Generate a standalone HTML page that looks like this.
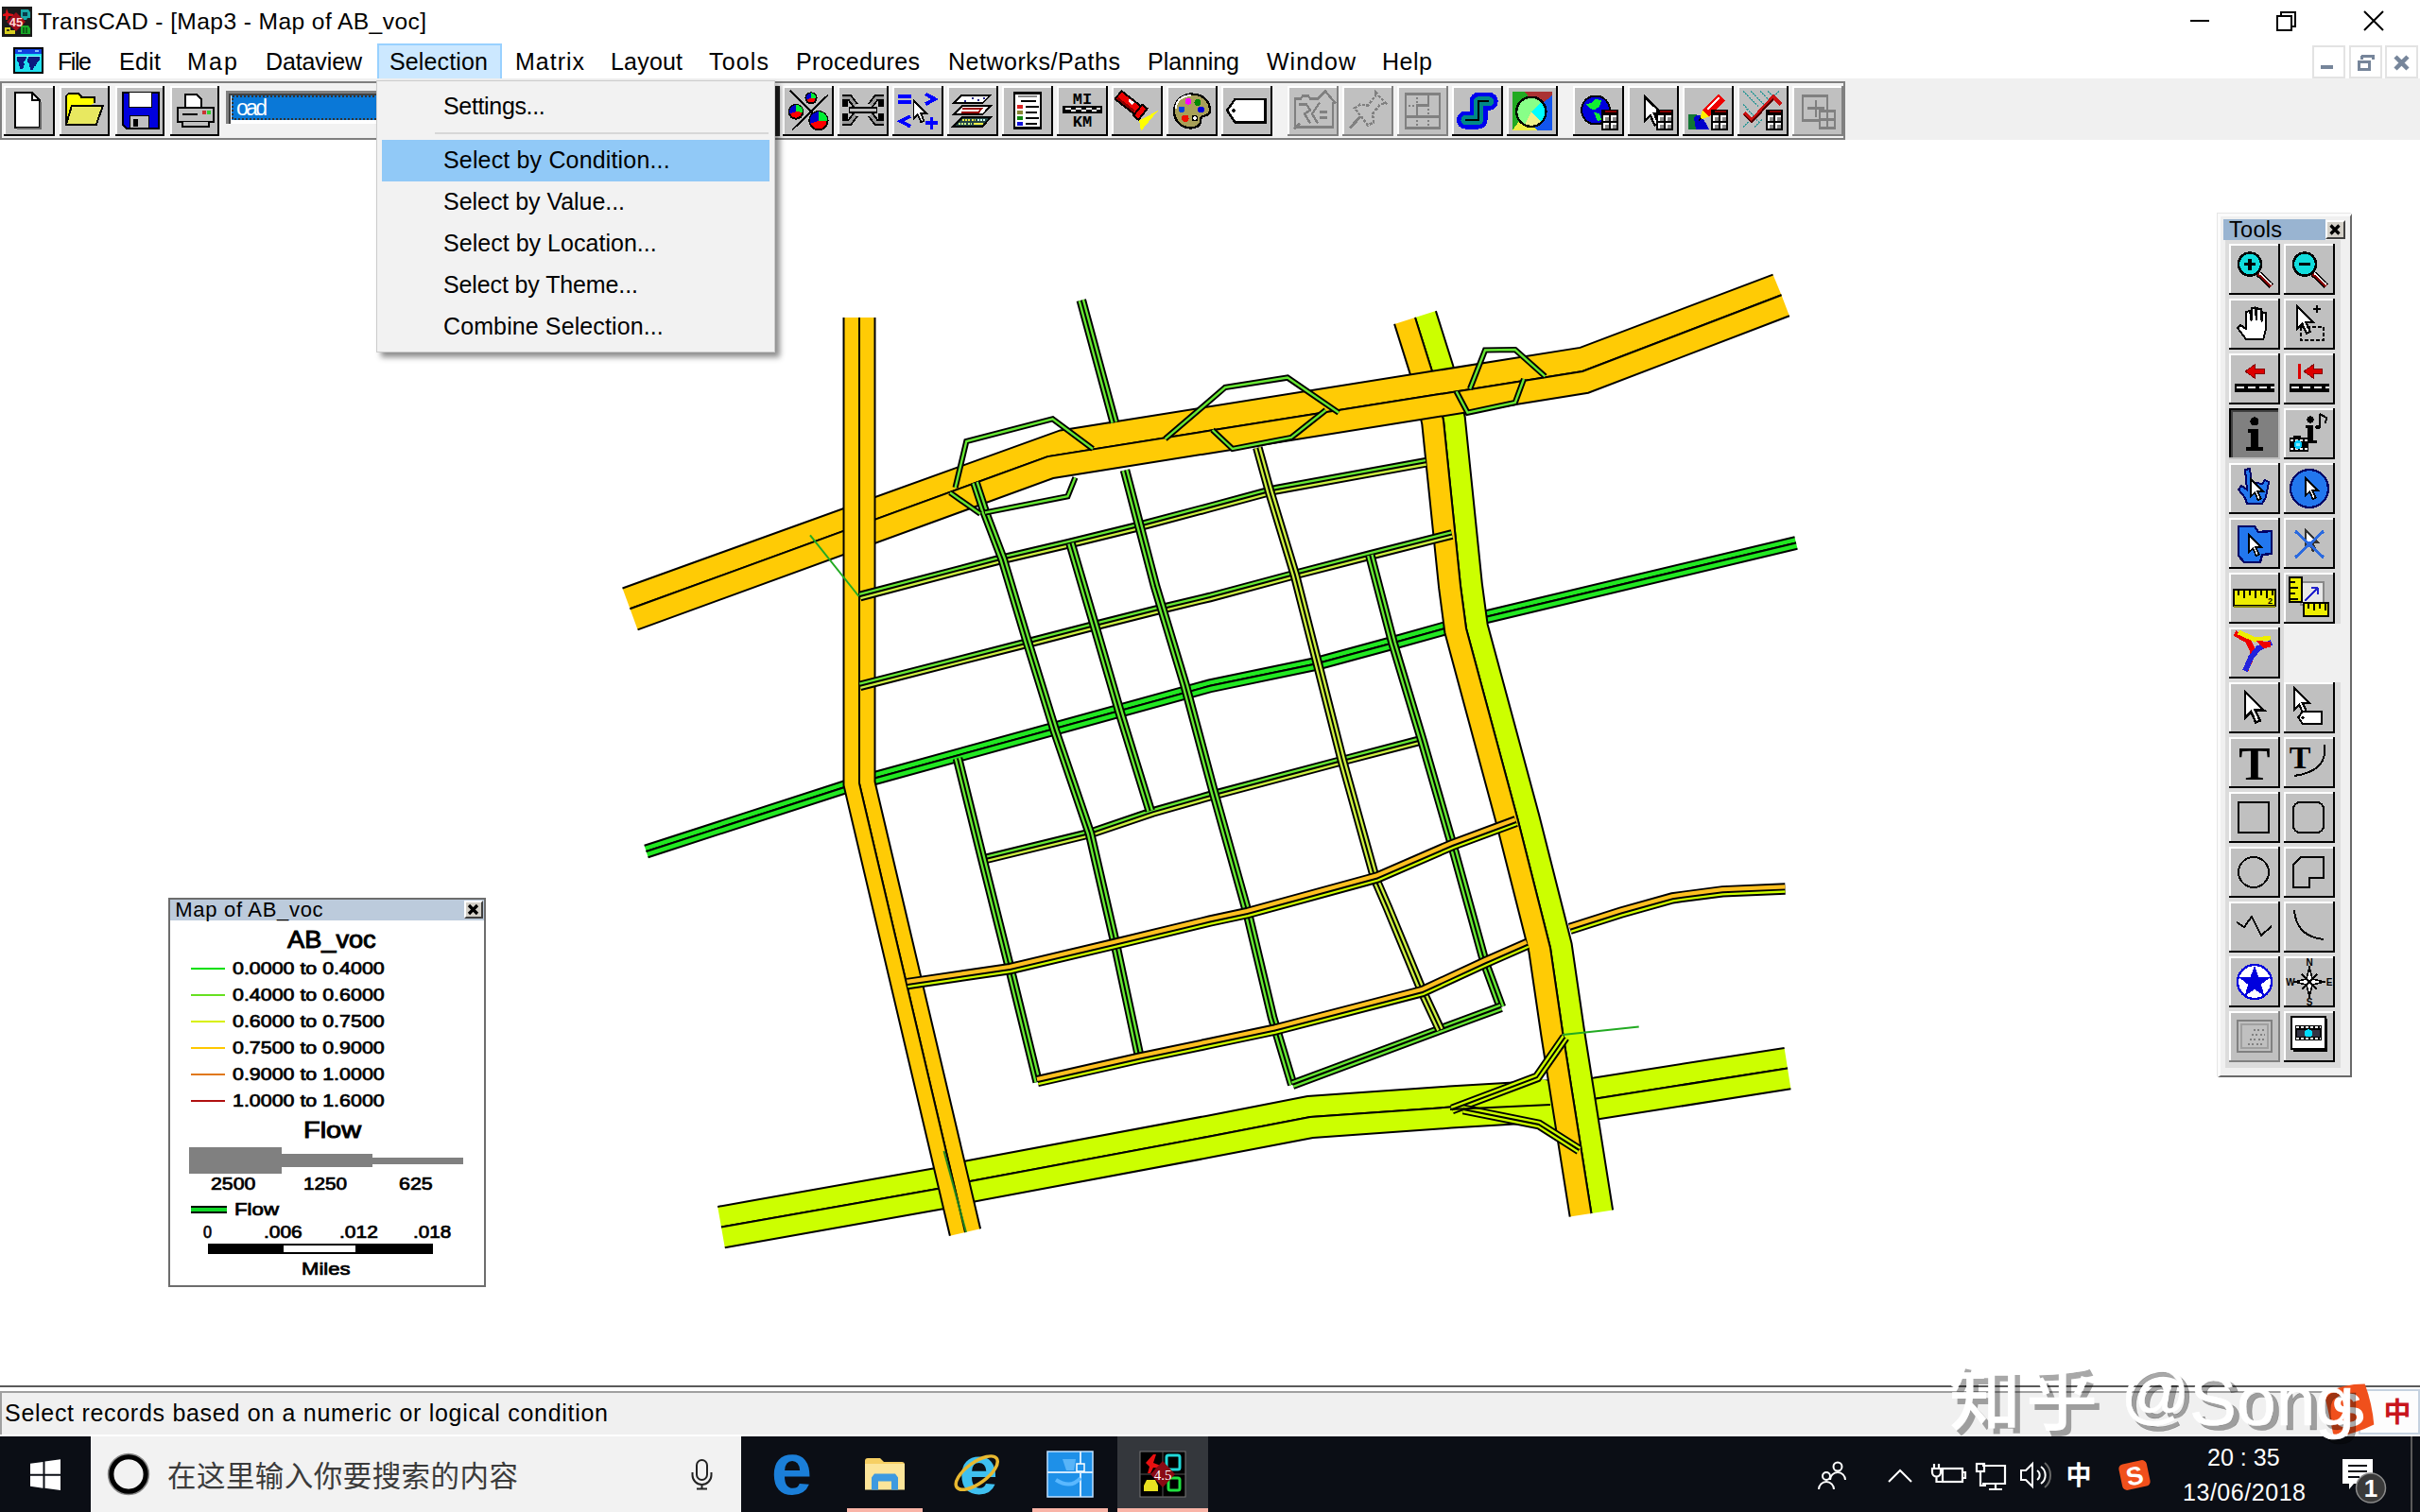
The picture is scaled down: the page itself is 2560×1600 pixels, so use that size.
<!DOCTYPE html>
<html><head><meta charset="utf-8"><title>TransCAD - [Map3 - Map of AB_voc]</title>
<style>
html,body{margin:0;padding:0;}
body{width:2560px;height:1600px;position:relative;overflow:hidden;background:#fff;font-family:"Liberation Sans","Noto Sans CJK SC",sans-serif;}
.t{position:absolute;white-space:pre;line-height:normal;}
.abs{position:absolute;}
</style></head><body>

<svg class="abs" style="left:0;top:0" width="2560" height="1600" viewBox="0 0 2560 1600">
<polygon points="683.6,901.0 909.0,828.0 1280.0,725.8 1392.0,702.5 1473.0,680.5 1526.0,665.7 1571.0,653.0 1900.0,574.5 1898.5,568.2 1569.4,646.7 1524.2,659.4 1471.3,674.2 1390.5,696.2 1278.5,719.5 907.1,821.8 681.6,894.8" fill="#22E822" stroke="none"/><polyline points="683.6,901.0 909.0,828.0 1280.0,725.8 1392.0,702.5 1473.0,680.5 1526.0,665.7 1571.0,653.0 1900.0,574.5" fill="none" stroke="#000" stroke-width="2"/><polyline points="681.6,894.8 907.1,821.8 1278.5,719.5 1390.5,696.2 1471.3,674.2 1524.2,659.4 1569.4,646.7 1898.5,568.2" fill="none" stroke="#000" stroke-width="2"/><polygon points="683.6,901.0 909.0,828.0 1280.0,725.8 1392.0,702.5 1473.0,680.5 1526.0,665.7 1571.0,653.0 1900.0,574.5 1901.5,580.8 1572.6,659.3 1527.8,672.0 1474.7,686.8 1393.5,708.8 1281.5,732.1 910.9,834.2 685.6,907.2" fill="#22E822" stroke="none"/><polyline points="683.6,901.0 909.0,828.0 1280.0,725.8 1392.0,702.5 1473.0,680.5 1526.0,665.7 1571.0,653.0 1900.0,574.5" fill="none" stroke="#000" stroke-width="2"/><polyline points="685.6,907.2 910.9,834.2 1281.5,732.1 1393.5,708.8 1474.7,686.8 1527.8,672.0 1572.6,659.3 1901.5,580.8" fill="none" stroke="#000" stroke-width="2"/>
<polygon points="763.0,1298.6 994.5,1257.6 1027.6,1249.7 1280.0,1202.5 1386.0,1182.0 1534.0,1171.6 1688.7,1162.4 1891.0,1130.6 1887.6,1108.9 1686.3,1140.5 1532.6,1149.6 1383.1,1160.1 1275.9,1180.9 1023.0,1228.2 990.0,1236.1 759.2,1276.9" fill="#CCFF00" stroke="none"/><polyline points="763.0,1298.6 994.5,1257.6 1027.6,1249.7 1280.0,1202.5 1386.0,1182.0 1534.0,1171.6 1688.7,1162.4 1891.0,1130.6" fill="none" stroke="#000" stroke-width="2"/><polyline points="759.2,1276.9 990.0,1236.1 1023.0,1228.2 1275.9,1180.9 1383.1,1160.1 1532.6,1149.6 1686.3,1140.5 1887.6,1108.9" fill="none" stroke="#000" stroke-width="2"/><polygon points="763.0,1298.6 994.5,1257.6 1027.6,1249.7 1280.0,1202.5 1386.0,1182.0 1534.0,1171.6 1688.7,1162.4 1891.0,1130.6 1894.4,1152.3 1691.1,1184.3 1535.4,1193.6 1388.9,1203.9 1284.1,1224.1 1032.2,1271.2 999.0,1279.1 766.8,1320.3" fill="#CCFF00" stroke="none"/><polyline points="763.0,1298.6 994.5,1257.6 1027.6,1249.7 1280.0,1202.5 1386.0,1182.0 1534.0,1171.6 1688.7,1162.4 1891.0,1130.6" fill="none" stroke="#000" stroke-width="2"/><polyline points="766.8,1320.3 999.0,1279.1 1032.2,1271.2 1284.1,1224.1 1388.9,1203.9 1535.4,1193.6 1691.1,1184.3 1894.4,1152.3" fill="none" stroke="#000" stroke-width="2"/>
<polygon points="1534,1174 1624,1140 1660,1150 1668,1200 1624,1193" fill="#CCFF00" stroke="none"/>
<polygon points="1497.0,336.0 1515.0,393.0 1527.0,445.0 1545.0,620.0 1551.0,665.0 1605.8,868.0 1640.0,1003.0 1653.0,1092.0 1683.4,1284.0 1706.1,1280.4 1675.7,1088.5 1662.6,998.5 1628.1,862.2 1573.6,660.5 1567.8,617.3 1549.7,441.2 1537.2,386.9 1518.9,329.1" fill="#CCFF00" stroke="none"/><polyline points="1497.0,336.0 1515.0,393.0 1527.0,445.0 1545.0,620.0 1551.0,665.0 1605.8,868.0 1640.0,1003.0 1653.0,1092.0 1683.4,1284.0" fill="none" stroke="#000" stroke-width="2"/><polyline points="1518.9,329.1 1537.2,386.9 1549.7,441.2 1567.8,617.3 1573.6,660.5 1628.1,862.2 1662.6,998.5 1675.7,1088.5 1706.1,1280.4" fill="none" stroke="#000" stroke-width="2"/><polygon points="1497.0,336.0 1515.0,393.0 1527.0,445.0 1545.0,620.0 1551.0,665.0 1605.8,868.0 1640.0,1003.0 1653.0,1092.0 1683.4,1284.0 1660.7,1287.6 1630.3,1095.5 1617.4,1007.5 1583.5,873.8 1528.4,669.5 1522.2,622.7 1504.3,448.8 1492.8,399.1 1475.1,342.9" fill="#FFCB05" stroke="none"/><polyline points="1497.0,336.0 1515.0,393.0 1527.0,445.0 1545.0,620.0 1551.0,665.0 1605.8,868.0 1640.0,1003.0 1653.0,1092.0 1683.4,1284.0" fill="none" stroke="#000" stroke-width="2"/><polyline points="1475.1,342.9 1492.8,399.1 1504.3,448.8 1522.2,622.7 1528.4,669.5 1583.5,873.8 1617.4,1007.5 1630.3,1095.5 1660.7,1287.6" fill="none" stroke="#000" stroke-width="2"/>
<polygon points="666.5,644.3 1108.3,483.1 1674.0,393.0 1884.5,312.3 1875.5,290.6 1671.5,367.9 1121.5,455.4 658.5,622.5" fill="#FFCB05" stroke="none"/><polyline points="666.5,644.3 1108.3,483.1 1674.0,393.0 1884.5,312.3" fill="none" stroke="#000" stroke-width="2"/><polyline points="658.5,622.5 1121.5,455.4 1671.5,367.9 1875.5,290.6" fill="none" stroke="#000" stroke-width="2"/><polygon points="666.5,644.3 1108.3,483.1 1674.0,393.0 1884.5,312.3 1892.9,334.2 1680.1,415.8 1114.2,506.0 674.6,666.4" fill="#FFCB05" stroke="none"/><polyline points="666.5,644.3 1108.3,483.1 1674.0,393.0 1884.5,312.3" fill="none" stroke="#000" stroke-width="2"/><polyline points="674.6,666.4 1114.2,506.0 1680.1,415.8 1892.9,334.2" fill="none" stroke="#000" stroke-width="2"/>
<polygon points="909.0,336.0 909.0,829.0 1021.0,1304.0 1037.1,1300.2 925.5,827.1 925.5,336.0" fill="#FFCB05" stroke="none"/><polyline points="909.0,336.0 909.0,829.0 1021.0,1304.0" fill="none" stroke="#000" stroke-width="2"/><polyline points="925.5,336.0 925.5,827.1 1037.1,1300.2" fill="none" stroke="#000" stroke-width="2"/><polygon points="909.0,336.0 909.0,829.0 1021.0,1304.0 1004.9,1307.8 892.5,830.9 892.5,336.0" fill="#FFCB05" stroke="none"/><polyline points="909.0,336.0 909.0,829.0 1021.0,1304.0" fill="none" stroke="#000" stroke-width="2"/><polyline points="892.5,336.0 892.5,830.9 1004.9,1307.8" fill="none" stroke="#000" stroke-width="2"/>
<polyline points="909.8,631.0 1052.7,593.5 1129.4,575.5 1200.8,558.0 1280.0,537.0 1349.6,518.2 1508.3,489.3" fill="none" stroke="#000" stroke-width="10.6" stroke-linejoin="miter"/><polyline points="909.2,628.9 1052.2,591.4 1128.9,573.4 1200.3,555.9 1279.4,534.9 1349.1,516.1 1507.9,487.1" fill="none" stroke="#66E833" stroke-width="2.4" /><polyline points="910.4,633.1 1053.2,595.6 1129.9,577.6 1201.3,560.1 1280.6,539.1 1350.1,520.3 1508.7,491.5" fill="none" stroke="#CCF040" stroke-width="2.4" />
<polyline points="909.8,725.8 1087.0,680.5 1158.5,662.0 1230.0,644.0 1280.0,632.0 1367.8,608.5 1449.3,587.5 1536.0,565.5" fill="none" stroke="#000" stroke-width="10.6" stroke-linejoin="miter"/><polyline points="909.3,723.7 1086.5,678.4 1158.0,659.9 1229.5,641.9 1279.5,629.9 1367.2,606.4 1448.8,585.4 1535.5,563.4" fill="none" stroke="#66E833" stroke-width="2.4" /><polyline points="910.3,727.9 1087.5,682.6 1159.0,664.1 1230.5,646.1 1280.5,634.1 1368.4,610.6 1449.8,589.6 1536.5,567.6" fill="none" stroke="#CCF040" stroke-width="2.4" />
<polyline points="1039.5,909.7 1153.0,882.0 1219.4,859.4 1280.0,842.2 1420.0,805.0 1504.5,783.0" fill="none" stroke="#000" stroke-width="10.6" stroke-linejoin="miter"/><polyline points="1039.0,907.6 1152.4,879.9 1218.7,857.3 1279.4,840.1 1419.4,802.9 1503.9,780.9" fill="none" stroke="#66E833" stroke-width="2.4" /><polyline points="1040.0,911.8 1153.6,884.1 1220.1,861.5 1280.6,844.3 1420.6,807.1 1505.1,785.1" fill="none" stroke="#CCF040" stroke-width="2.4" />
<polyline points="1143.8,317.6 1178.8,447.0" fill="none" stroke="#000" stroke-width="10.6" stroke-linejoin="miter"/><polyline points="1145.9,317.0 1180.9,446.4" fill="none" stroke="#66E833" stroke-width="2.4" /><polyline points="1141.7,318.2 1176.7,447.6" fill="none" stroke="#66E833" stroke-width="2.4" />
<polyline points="1190.0,497.5 1222.0,620.0 1253.8,725.8 1283.0,835.0 1319.7,966.0 1346.0,1076.4 1367.3,1147.8" fill="none" stroke="#000" stroke-width="10.6" stroke-linejoin="miter"/><polyline points="1192.1,496.9 1224.1,619.4 1255.9,725.2 1285.1,834.4 1321.8,965.4 1348.1,1075.8 1369.4,1147.2" fill="none" stroke="#66E833" stroke-width="2.4" /><polyline points="1187.9,498.1 1219.9,620.6 1251.7,726.4 1280.9,835.6 1317.6,966.6 1343.9,1077.0 1365.2,1148.4" fill="none" stroke="#66E833" stroke-width="2.4" />
<polyline points="1031.5,510.7 1042.0,542.5 1060.6,591.4 1087.0,679.5 1116.0,773.4 1153.0,882.0 1179.7,998.0 1206.0,1121.4" fill="none" stroke="#000" stroke-width="10.6" stroke-linejoin="miter"/><polyline points="1033.6,510.0 1044.1,541.8 1062.7,590.7 1089.1,678.9 1118.1,772.7 1155.1,881.4 1181.8,997.5 1208.2,1120.9" fill="none" stroke="#66E833" stroke-width="2.4" /><polyline points="1029.4,511.4 1039.9,543.2 1058.5,592.1 1084.9,680.1 1113.9,774.1 1150.9,882.6 1177.6,998.5 1203.8,1121.9" fill="none" stroke="#66E833" stroke-width="2.4" />
<polyline points="1132.5,575.0 1158.0,662.0 1184.5,753.3 1216.7,858.0" fill="none" stroke="#000" stroke-width="10.6" stroke-linejoin="miter"/><polyline points="1134.6,574.4 1160.1,661.4 1186.6,752.7 1218.8,857.4" fill="none" stroke="#66E833" stroke-width="2.4" /><polyline points="1130.4,575.6 1155.9,662.6 1182.4,753.9 1214.6,858.6" fill="none" stroke="#66E833" stroke-width="2.4" />
<polyline points="1013.0,802.5 1039.5,909.7 1068.6,1026.0 1097.7,1145.0" fill="none" stroke="#000" stroke-width="10.6" stroke-linejoin="miter"/><polyline points="1015.1,802.0 1041.6,909.2 1070.7,1025.5 1099.8,1144.5" fill="none" stroke="#66E833" stroke-width="2.4" /><polyline points="1010.9,803.0 1037.4,910.2 1066.5,1026.5 1095.6,1145.5" fill="none" stroke="#66E833" stroke-width="2.4" />
<polyline points="1449.3,587.5 1473.6,680.6 1504.5,783.5 1536.6,895.0 1571.0,1019.5 1588.0,1065.8" fill="none" stroke="#000" stroke-width="10.6" stroke-linejoin="miter"/><polyline points="1451.4,586.9 1475.7,680.0 1506.6,782.9 1538.7,894.4 1573.1,1018.8 1590.1,1065.0" fill="none" stroke="#66E833" stroke-width="2.4" /><polyline points="1447.2,588.1 1471.5,681.2 1502.4,784.1 1534.5,895.6 1568.9,1020.2 1585.9,1066.6" fill="none" stroke="#66E833" stroke-width="2.4" />
<polyline points="1367.3,1147.8 1523.4,1089.6 1588.0,1065.8" fill="none" stroke="#000" stroke-width="10.6" stroke-linejoin="miter"/><polyline points="1366.5,1145.7 1522.6,1087.5 1587.2,1063.7" fill="none" stroke="#66E833" stroke-width="2.4" /><polyline points="1368.1,1149.9 1524.2,1091.7 1588.8,1067.9" fill="none" stroke="#66E833" stroke-width="2.4" />
<polyline points="1330.3,473.7 1343.5,521.3 1370.0,608.6 1393.8,702.0 1420.0,805.0 1454.6,929.5 1467.8,960.0 1505.0,1050.0 1523.4,1089.6" fill="none" stroke="#000" stroke-width="10.6" stroke-linejoin="miter"/><polyline points="1332.4,473.1 1345.6,520.7 1372.1,608.0 1395.9,701.5 1422.1,804.4 1456.7,928.8 1469.8,959.1 1507.0,1049.1 1525.4,1088.7" fill="none" stroke="#CCF040" stroke-width="2.4" /><polyline points="1328.2,474.3 1341.4,521.9 1367.9,609.2 1391.7,702.5 1417.9,805.6 1452.5,930.2 1465.8,960.9 1503.0,1050.9 1521.4,1090.5" fill="none" stroke="#CCF040" stroke-width="2.4" />
<polyline points="959.9,1041.1 1068.4,1025.1 1179.5,998.8 1279.8,974.6 1319.5,966.1 1456.7,928.6 1536.2,894.1 1603.7,869.1" fill="none" stroke="#000" stroke-width="12.3" stroke-linejoin="miter"/><polyline points="959.5,1038.9 1068.0,1023.0 1179.0,996.7 1279.3,972.5 1319.0,964.0 1456.0,926.6 1535.4,892.1 1602.9,867.1" fill="none" stroke="#FFC020" stroke-width="4.2" /><polyline points="960.3,1044.1 1069.0,1028.1 1180.2,1001.8 1280.5,977.6 1320.2,969.1 1457.7,931.5 1537.4,897.0 1604.7,872.0" fill="none" stroke="#CCFF00" stroke-width="2.3" />
<polyline points="1097.5,1144.1 1205.8,1119.6 1279.8,1104.1 1348.6,1089.6 1504.7,1049.1 1570.6,1018.6 1615.6,998.8" fill="none" stroke="#000" stroke-width="12.3" stroke-linejoin="miter"/><polyline points="1097.0,1142.0 1205.3,1117.5 1279.4,1102.0 1348.1,1087.5 1504.0,1047.1 1569.7,1016.7 1614.8,996.9" fill="none" stroke="#FFC020" stroke-width="4.2" /><polyline points="1098.2,1147.1 1206.5,1122.6 1280.4,1107.1 1349.3,1092.6 1505.7,1052.0 1571.9,1021.5 1616.9,1001.7" fill="none" stroke="#CCFF00" stroke-width="2.3" />
<polyline points="1660.7,982.9 1714.7,965.6 1769.2,950.3 1822.2,943.3 1888.5,940.5" fill="none" stroke="#000" stroke-width="12.3" stroke-linejoin="miter"/><polyline points="1660.1,980.8 1714.1,963.5 1768.8,948.2 1822.0,941.1 1888.4,938.3" fill="none" stroke="#FFC020" stroke-width="4.2" /><polyline points="1661.7,985.8 1715.6,968.6 1769.8,953.3 1822.5,946.3 1888.6,943.5" fill="none" stroke="#CCFF00" stroke-width="2.3" />
<polyline points="1010.6,516.0 1022.3,467.0 1113.5,443.3 1156.0,475.0" fill="none" stroke="#000" stroke-width="6.2" /><polyline points="1010.6,516.0 1022.3,467.0 1113.5,443.3 1156.0,475.0" fill="none" stroke="#66E833" stroke-width="2.4" />
<polyline points="1005.0,521.3 1037.0,543.8" fill="none" stroke="#000" stroke-width="6.2" /><polyline points="1005.0,521.3 1037.0,543.8" fill="none" stroke="#66E833" stroke-width="2.4" />
<polyline points="1042.0,542.5 1129.4,525.3 1137.4,505.4" fill="none" stroke="#000" stroke-width="6.2" /><polyline points="1042.0,542.5 1129.4,525.3 1137.4,505.4" fill="none" stroke="#66E833" stroke-width="2.4" />
<polyline points="1232.6,464.4 1296.0,410.0 1362.0,399.6 1416.2,436.7" fill="none" stroke="#000" stroke-width="6.2" /><polyline points="1232.6,464.4 1296.0,410.0 1362.0,399.6 1416.2,436.7" fill="none" stroke="#66E833" stroke-width="2.4" />
<polyline points="1282.6,455.0 1303.8,475.0 1366.0,463.0 1402.5,434.0" fill="none" stroke="#000" stroke-width="6.2" /><polyline points="1282.6,455.0 1303.8,475.0 1366.0,463.0 1402.5,434.0" fill="none" stroke="#66E833" stroke-width="2.4" />
<polyline points="1555.0,411.5 1571.0,370.5 1602.8,370.0 1634.5,398.3" fill="none" stroke="#000" stroke-width="6.2" /><polyline points="1555.0,411.5 1571.0,370.5 1602.8,370.0 1634.5,398.3" fill="none" stroke="#66E833" stroke-width="2.4" />
<polyline points="1540.6,414.2 1552.5,436.7 1602.8,426.0 1612.0,401.0" fill="none" stroke="#000" stroke-width="6.2" /><polyline points="1540.6,414.2 1552.5,436.7 1602.8,426.0 1612.0,401.0" fill="none" stroke="#66E833" stroke-width="2.4" />
<polyline points="1655.5,1097.6 1626.0,1140.0 1536.0,1174.0" fill="none" stroke="#000" stroke-width="10.6" stroke-linejoin="miter"/><polyline points="1657.3,1098.9 1627.4,1141.8 1536.8,1176.1" fill="none" stroke="#CCFF00" stroke-width="2.4" /><polyline points="1653.7,1096.3 1624.6,1138.2 1535.2,1171.9" fill="none" stroke="#CCFF00" stroke-width="2.4" />
<polyline points="1548.0,1174.0 1628.0,1190.0 1670.5,1217.0" fill="none" stroke="#000" stroke-width="10.6" stroke-linejoin="miter"/><polyline points="1548.4,1171.8 1628.8,1187.9 1671.7,1215.1" fill="none" stroke="#CCFF00" stroke-width="2.4" /><polyline points="1547.6,1176.2 1627.2,1192.1 1669.3,1218.9" fill="none" stroke="#CCFF00" stroke-width="2.4" />
<polyline points="1534.0,1174.0 1640.0,1169.0" fill="none" stroke="#000" stroke-width="2" />
<polyline points="857.0,566.3 908.5,631.0" fill="none" stroke="#22AA22" stroke-width="2" />
<polyline points="1653.0,1095.0 1733.7,1086.5" fill="none" stroke="#22AA22" stroke-width="2" />
<polyline points="998.5,1218.0 1022.0,1304.0" fill="none" stroke="#228822" stroke-width="2" />
</svg>
<svg class="abs" style="left:2px;top:7px" width="32" height="32" viewBox="0 0 32 32">
<rect width="32" height="32" fill="#1a1a1a"/>
<path d="M5 2l2 5 5 1v2l-5 0-1 4h-2l0-4-3 0v-2l3-1z" fill="#e01018"/>
<path d="M20 3h8l2 3v6h-3l-1 2h-3l-1-2h-2z" fill="#18a8a8"/><path d="M22 6h5v4h-5z" fill="#0a3a4a"/>
<path d="M3 22h6v3h5v4h-11z" fill="#d8d020"/><path d="M5 24h3v2h-3z" fill="#3a3410"/>
<path d="M20 20h8l2 3v6h-10z" fill="#18a828"/><path d="M23 22v6M26 22v6" stroke="#0a4a12" stroke-width="1.5"/>
<polygon points="15,6 25,16 15,26 5,16" fill="#a00c18"/>
<text x="15" y="21" font-size="13" font-weight="bold" text-anchor="middle" fill="#ffd8d8" font-family="Liberation Sans,sans-serif">45</text>
</svg>
<span class="t" style="left:40.0px;top:9.3px;font-size:24.6px;font-weight:normal;color:#000;font-family:'Liberation Sans','Noto Sans CJK SC',sans-serif;letter-spacing:0.40px;">TransCAD - [Map3 - Map of AB_voc]</span>
<svg class="abs" style="left:2300px;top:0" width="260" height="44" viewBox="2300 0 260 44" shape-rendering="crispEdges">
<rect x="2317" y="21" width="20" height="2" fill="#000"/>
<rect x="2409" y="17" width="15" height="15" fill="none" stroke="#000" stroke-width="2"/>
<path d="M2413 17v-4h15v15h-4" fill="none" stroke="#000" stroke-width="2"/>
<path d="M2501 12l20 20M2521 12l-20 20" stroke="#000" stroke-width="2" shape-rendering="auto"/>
</svg>
<svg class="abs" style="left:14px;top:50px" width="32" height="28" viewBox="0 0 32 28" shape-rendering="crispEdges">
<rect width="32" height="28" fill="#000"/><rect x="2" y="2" width="28" height="24" fill="#20e0f0"/>
<rect x="2" y="2" width="28" height="5" fill="#1040e0"/><rect x="5" y="3" width="4" height="2" fill="#80c0ff"/><rect x="23" y="3" width="4" height="2" fill="#80c0ff"/>
<path d="M4 10h10l-1 4-2 1 1 3-2 5h-3l-1-6-2-2zM16 10h12v4l-3 2-1 4h-2l-1 4h-3l-1-6-2-3z" fill="#0c1a80"/><path d="M3 9h26" stroke="#8ff" stroke-width="1"/>
</svg>
<div class="abs" style="left:399px;top:46px;width:128px;height:35px;background:#cce8ff;border:2px solid #99d1ff;"></div>
<span class="t" style="left:61.0px;top:50.8px;font-size:25px;font-weight:normal;color:#000;font-family:'Liberation Sans','Noto Sans CJK SC',sans-serif;letter-spacing:-1.43px;">File</span>
<span class="t" style="left:126.0px;top:50.8px;font-size:25px;font-weight:normal;color:#000;font-family:'Liberation Sans','Noto Sans CJK SC',sans-serif;letter-spacing:0.31px;">Edit</span>
<span class="t" style="left:198.0px;top:50.8px;font-size:25px;font-weight:normal;color:#000;font-family:'Liberation Sans','Noto Sans CJK SC',sans-serif;letter-spacing:2.18px;">Map</span>
<span class="t" style="left:281.0px;top:50.8px;font-size:25px;font-weight:normal;color:#000;font-family:'Liberation Sans','Noto Sans CJK SC',sans-serif;letter-spacing:-0.12px;">Dataview</span>
<span class="t" style="left:412.0px;top:50.8px;font-size:25px;font-weight:normal;color:#000;font-family:'Liberation Sans','Noto Sans CJK SC',sans-serif;letter-spacing:0.14px;">Selection</span>
<span class="t" style="left:545.0px;top:50.8px;font-size:25px;font-weight:normal;color:#000;font-family:'Liberation Sans','Noto Sans CJK SC',sans-serif;letter-spacing:0.99px;">Matrix</span>
<span class="t" style="left:646.0px;top:50.8px;font-size:25px;font-weight:normal;color:#000;font-family:'Liberation Sans','Noto Sans CJK SC',sans-serif;letter-spacing:0.19px;">Layout</span>
<span class="t" style="left:750.0px;top:50.8px;font-size:25px;font-weight:normal;color:#000;font-family:'Liberation Sans','Noto Sans CJK SC',sans-serif;letter-spacing:1.16px;">Tools</span>
<span class="t" style="left:842.0px;top:50.8px;font-size:25px;font-weight:normal;color:#000;font-family:'Liberation Sans','Noto Sans CJK SC',sans-serif;letter-spacing:0.35px;">Procedures</span>
<span class="t" style="left:1003.0px;top:50.8px;font-size:25px;font-weight:normal;color:#000;font-family:'Liberation Sans','Noto Sans CJK SC',sans-serif;letter-spacing:0.53px;">Networks/Paths</span>
<span class="t" style="left:1214.0px;top:50.8px;font-size:25px;font-weight:normal;color:#000;font-family:'Liberation Sans','Noto Sans CJK SC',sans-serif;letter-spacing:-0.04px;">Planning</span>
<span class="t" style="left:1340.0px;top:50.8px;font-size:25px;font-weight:normal;color:#000;font-family:'Liberation Sans','Noto Sans CJK SC',sans-serif;letter-spacing:1.02px;">Window</span>
<span class="t" style="left:1462.0px;top:50.8px;font-size:25px;font-weight:normal;color:#000;font-family:'Liberation Sans','Noto Sans CJK SC',sans-serif;letter-spacing:0.53px;">Help</span>
<div class="abs" style="left:2446px;top:48px;width:31px;height:31px;background:#fff;border:2px solid #e3e3e3;"></div>
<div class="abs" style="left:2485px;top:48px;width:31px;height:31px;background:#fff;border:2px solid #e3e3e3;"></div>
<div class="abs" style="left:2523px;top:48px;width:31px;height:31px;background:#fff;border:2px solid #e3e3e3;"></div>
<svg class="abs" style="left:2440px;top:46px" width="120" height="40" viewBox="2440 46 120 40" shape-rendering="crispEdges">
<rect x="2455" y="69" width="13" height="4" fill="#76859a"/>
<path d="M2498 59h12v4M2498 59v4" fill="none" stroke="#76859a" stroke-width="3"/>
<rect x="2495" y="65" width="11" height="8" fill="none" stroke="#76859a" stroke-width="3"/>
<path d="M2534 60l13 13M2547 60l-13 13" stroke="#76859a" stroke-width="4.5" shape-rendering="auto"/>
</svg>
<div class="abs" style="left:0px;top:82.5px;width:2560px;height:65px;background:#f0f0f0;"></div>
<div class="abs" style="left:0px;top:86px;width:1952px;height:62px;background:#f2f2f2;box-sizing:border-box;border-top:2px solid #808080;border-bottom:2px solid #808080;border-left:2px solid #808080;border-right:2px solid #808080;"></div>
<svg class="abs" style="left:0;top:86px" width="1960" height="64" viewBox="0 86 1960 64" shape-rendering="crispEdges"><g transform="translate(3.5,90.5)"><rect width="54.5" height="53.5" fill="#c0c0c0"/><rect width="54.5" height="2" fill="#fff"/><rect width="2" height="53.5" fill="#fff"/><rect y="51.5" width="54.5" height="2" fill="#000"/><rect x="52.5" width="2" height="53.5" fill="#000"/><g transform="scale(2)"><path d="M6 3.5h9l4 4v14.5h-13z" fill="#fff" stroke="#000"/><path d="M15 3.5v4h4" fill="none" stroke="#000"/><path d="M7 22.7h12.7v-14" fill="none" stroke="#666" stroke-width="1"/></g></g><g transform="translate(63,90.5)"><rect width="52.5" height="53.5" fill="#c0c0c0"/><rect width="52.5" height="2" fill="#fff"/><rect width="2" height="53.5" fill="#fff"/><rect y="51.5" width="52.5" height="2" fill="#000"/><rect x="50.5" width="2" height="53.5" fill="#000"/><g transform="scale(2)"><path d="M3.5 20v-14.5l1.5-1.500h5l1.500 2h7v3" fill="#ff0" stroke="#000"/><path d="M3.500 20.500l3-10h16.500l-3.500 10z" fill="#e8e860" stroke="#000"/></g></g><g transform="translate(121.5,90.5)"><rect width="52" height="53.5" fill="#c0c0c0"/><rect width="52" height="2" fill="#fff"/><rect width="2" height="53.5" fill="#fff"/><rect y="51.5" width="52" height="2" fill="#000"/><rect x="50" width="2" height="53.5" fill="#000"/><g transform="scale(2)"><path d="M4 3.500h19v19h-17l-2-2z" fill="#00d" stroke="#000"/><rect x="7.500" y="3.500" width="12" height="8" fill="#fff" stroke="#000" stroke-width=".6"/><rect x="8" y="16" width="10" height="6.500" fill="#c0c0c0" stroke="#000" stroke-width=".6"/><rect x="9.500" y="17.500" width="2.500" height="4" fill="#000"/></g></g><g transform="translate(179.5,90.5)"><rect width="52" height="53.5" fill="#c0c0c0"/><rect width="52" height="2" fill="#fff"/><rect width="2" height="53.5" fill="#fff"/><rect y="51.5" width="52" height="2" fill="#000"/><rect x="50" width="2" height="53.5" fill="#000"/><g transform="scale(2)"><path d="M8 11v-6.500h6l2.500 2.500v4" fill="#fff" stroke="#000"/><path d="M4 11.500h19v7.500h-19z" fill="#c0c0c0" stroke="#000"/><path d="M6.500 19v2.500h14v-2.500" fill="#c0c0c0" stroke="#000"/><rect x="6.500" y="14.500" width="8" height="1.200" fill="#000"/><rect x="17" y="13" width="2" height="2" fill="#c33"/><rect x="19.500" y="13" width="2" height="2" fill="#3c3"/></g></g><g transform="translate(828,90.5)"><rect width="54" height="53.5" fill="#c0c0c0"/><rect width="54" height="2" fill="#fff"/><rect width="2" height="53.5" fill="#fff"/><rect y="51.5" width="54" height="2" fill="#000"/><rect x="52" width="2" height="53.5" fill="#000"/><g transform="scale(2)"><path d="M4 2.700l12 12M24 5l-19 18.500" stroke="#000" stroke-width="1"/><circle cx="15" cy="6.7" r="2.8" fill="#f00" stroke="#000" stroke-width="1"/><path d="M15 6.7L12.48 7.54A2.8 2.8 0 0 1 15 3.9000000000000004z" fill="#00c"/><path d="M15 6.7V3.9000000000000004A2.8 2.8 0 0 1 17.8 6.9z" fill="#0e3"/><circle cx="7" cy="13.9" r="3.7" fill="#f00" stroke="#000" stroke-width="1"/><path d="M7 13.9L3.67 15.01A3.7 3.7 0 0 1 7 10.2z" fill="#00c"/><path d="M7 13.9V10.2A3.7 3.7 0 0 1 10.7 14.1z" fill="#0e3"/><circle cx="19" cy="18.6" r="4.8" fill="#f00" stroke="#000" stroke-width="1"/><path d="M19 18.6L14.68 20.040000000000003A4.8 4.8 0 0 1 19 13.8z" fill="#00c"/><path d="M19 18.6V13.8A4.8 4.8 0 0 1 23.8 18.8z" fill="#0e3"/></g></g><g transform="translate(886,90.5)"><rect width="54" height="53.5" fill="#c0c0c0"/><rect width="54" height="2" fill="#fff"/><rect width="2" height="53.5" fill="#fff"/><rect y="51.5" width="54" height="2" fill="#000"/><rect x="52" width="2" height="53.5" fill="#000"/><g transform="scale(2)"><g fill="none" stroke="#000" stroke-width="3.400"><path d="M2.500 6.500h4l3 4M2.500 9.500h3M2.500 19.500h4l3-4M2.500 16.500h3M24.500 6.500h-4l-3 4M24.500 9.500h-3M24.500 19.500h-4l-3-4M24.500 16.500h-3"/><path d="M6 13h15"/></g><g fill="none" stroke="#999" stroke-width="1.600"><path d="M2.500 6.500h4l3 4M2.500 19.500h4l3-4M24.500 6.500h-4l-3 4M24.500 19.500h-4l-3-4"/><path d="M6.500 13h14" stroke="#bbb"/></g></g></g><g transform="translate(944,90.5)"><rect width="54" height="53.5" fill="#c0c0c0"/><rect width="54" height="2" fill="#fff"/><rect width="2" height="53.5" fill="#fff"/><rect y="51.5" width="54" height="2" fill="#000"/><rect x="52" width="2" height="53.5" fill="#000"/><g transform="scale(2)"><g fill="none" stroke="#00f" stroke-width="1.900"><path d="M3 5.900h7M3 8.800h7"/><path d="M17.500 4.500l5 2.700-5 2.700"/><path d="M9.500 16.200l-5 2.700 5 2.700"/><path d="M17.500 19.700h6.500M20.700 16.500v6.500"/></g><g transform="translate(11.2,7.9) scale(0.88)"><path d="M0 0v11l2.5-2.5 2 4.5 1.8-.8-2-4.4h3.6z" fill="#fff" stroke="#000" stroke-width="1"/></g></g></g><g transform="translate(1002,90.5)"><rect width="54" height="53.5" fill="#c0c0c0"/><rect width="54" height="2" fill="#fff"/><rect width="2" height="53.5" fill="#fff"/><rect y="51.5" width="54" height="2" fill="#000"/><rect x="52" width="2" height="53.5" fill="#000"/><g transform="scale(2)"><path d="M3.200 9.400l4.500-4.400h15.300l-4.400 4.400z" fill="#fff" stroke="#000" stroke-width="1"/><path d="M9 8h1M13 6.500h1M16 7.800h1M19 6.500h1" stroke="#228" stroke-width="1"/><path d="M3.200 15.400l4.500-4.500h15.300l-4.400 4.500z" fill="#fff" stroke="#000" stroke-width="1"/><path d="M8 12.300h10l-1.500 2h-9" stroke="#900" stroke-width="1" fill="none"/><path d="M3.200 21.600l4.500-4.700h15.300l-4.400 4.700z" fill="#244" stroke="#000" stroke-width="1"/><path d="M8 18.300h7" stroke="#ee4" stroke-width="1" stroke-dasharray="1 .6"/><path d="M16 18.300h5" stroke="#cfe" stroke-width="1" stroke-dasharray="1 .6"/><path d="M6 20.200h7" stroke="#cf8" stroke-width="1" stroke-dasharray="1 .6"/><path d="M14 20.200h5" stroke="#ee4" stroke-width="1"/></g></g><g transform="translate(1060,90.5)"><rect width="54" height="53.5" fill="#c0c0c0"/><rect width="54" height="2" fill="#fff"/><rect width="2" height="53.5" fill="#fff"/><rect y="51.5" width="54" height="2" fill="#000"/><rect x="52" width="2" height="53.5" fill="#000"/><g transform="scale(2)"><rect x="6.500" y="4" width="14" height="18.500" fill="#fff" stroke="#000" stroke-width="1.200"/><rect x="8.500" y="5" width="10" height="1" fill="#888"/><rect x="10" y="7.500" width="8" height="1" fill="#000"/><rect x="8" y="10" width="3" height="2" fill="#d22"/><rect x="12.500" y="10.8" width="7" height="1" fill="#000"/><rect x="8" y="13" width="3" height="2" fill="#883"/><rect x="12.500" y="13.8" width="6" height="1" fill="#000"/><rect x="8" y="16" width="3" height="2" fill="#181"/><rect x="12.500" y="16.8" width="7" height="1" fill="#000"/><rect x="8" y="19" width="3" height="2" fill="#11d"/><rect x="12.500" y="19.8" width="6" height="1" fill="#000"/></g></g><g transform="translate(1118,90.5)"><rect width="54" height="53.5" fill="#c0c0c0"/><rect width="54" height="2" fill="#fff"/><rect width="2" height="53.5" fill="#fff"/><rect y="51.5" width="54" height="2" fill="#000"/><rect x="52" width="2" height="53.5" fill="#000"/><g transform="scale(2)"><rect x="3" y="10.700" width="21" height="4" fill="#000"/><path d="M4.500 12.200h3M10 12.200h3M15.500 12.200h3M21 12.200h2M7.500 13.200h2.500M13 13.200h2.500M18.500 13.200h2.500" stroke="#fff" stroke-width="1"/><text x="13.500" y="9.600" font-size="8.500" font-weight="bold" text-anchor="middle" font-family="Liberation Mono,monospace" fill="#000">MI</text><text x="13.500" y="21.700" font-size="8.500" font-weight="bold" text-anchor="middle" font-family="Liberation Mono,monospace" fill="#000">KM</text></g></g><g transform="translate(1176,90.5)"><rect width="54" height="53.5" fill="#c0c0c0"/><rect width="54" height="2" fill="#fff"/><rect width="2" height="53.5" fill="#fff"/><rect y="51.5" width="54" height="2" fill="#000"/><rect x="52" width="2" height="53.5" fill="#000"/><g transform="scale(2)"><polygon points="14.500,18.500 24.500,13.300 15.500,24" fill="#ff0"/><g transform="rotate(38 4 6)"><rect x="3" y="2.800" width="13" height="5.500" fill="#e00" stroke="#000" stroke-width="1"/><path d="M16 1.800h3.500v7.500h-3.500z" fill="#e00" stroke="#000"/><rect x="9" y="3.500" width="3" height="1.500" fill="#fff"/><rect x="4" y="6.500" width="11" height="1.300" fill="#800"/></g></g></g><g transform="translate(1234,90.5)"><rect width="54" height="53.5" fill="#c0c0c0"/><rect width="54" height="2" fill="#fff"/><rect width="2" height="53.5" fill="#fff"/><rect y="51.5" width="54" height="2" fill="#000"/><rect x="52" width="2" height="53.5" fill="#000"/><g transform="scale(2)"><path d="M13.300 4.500c6 0 9.700 4 9.700 8.500 0 2.500-2 3-3.500 3.200-1.500.3-1.500 1.500-1.500 3s-2 3.300-5 3.300c-5.500 0-9-4.300-9-9s4-9 9.300-9z" fill="#a8a058" stroke="#000" stroke-width="1.200"/><path d="M5 12c0-4 3.500-6.700 8-6.700" stroke="#fff" stroke-width="1" fill="none"/><circle cx="11.500" cy="8.400" r="1.700" fill="#f0f"/><circle cx="16.400" cy="9" r="1.700" fill="#080"/><circle cx="8" cy="12.700" r="1.700" fill="#04d"/><circle cx="18.300" cy="12.700" r="1.700" fill="#00d"/><circle cx="9.900" cy="17.400" r="1.900" fill="#e10"/><circle cx="15" cy="17.300" r="1.300" fill="#fff" stroke="#000" stroke-width=".8"/></g></g><g transform="translate(1292,90.5)"><rect width="54" height="53.5" fill="#c0c0c0"/><rect width="54" height="2" fill="#fff"/><rect width="2" height="53.5" fill="#fff"/><rect y="51.5" width="54" height="2" fill="#000"/><rect x="52" width="2" height="53.5" fill="#000"/><g transform="scale(2)"><path d="M3 13.200l4.300-6h16v12.300h-16z" fill="#fff" stroke="#000" stroke-width="1.200"/><path d="M5.300 13.200h2.400M6.500 12v2.400" stroke="#000" stroke-width="1"/></g></g><g transform="translate(1362,90.5)"><rect width="54" height="53.5" fill="#c0c0c0"/><rect width="54" height="2" fill="#fff"/><rect width="2" height="53.5" fill="#fff"/><rect y="51.5" width="54" height="2" fill="#808080"/><rect x="52" width="2" height="53.5" fill="#808080"/><g transform="scale(2)"><g fill="none" stroke="#808080" stroke-width="1.200"><path d="M4 7h3l1-1.500h3l1 1.500h4l4-4 5 6-1 .5v12.500h-20z"/><path d="M6 10h4l2 3-3 2 3 5M17 9l-4 6 3 5M17 14h4M17 17h4M3.500 23l3-3"/></g></g></g><g transform="translate(1420,90.5)"><rect width="54" height="53.5" fill="#c0c0c0"/><rect width="54" height="2" fill="#fff"/><rect width="2" height="53.5" fill="#fff"/><rect y="51.5" width="54" height="2" fill="#808080"/><rect x="52" width="2" height="53.5" fill="#808080"/><g transform="scale(2)"><g fill="none" stroke="#808080" stroke-width="1.200" stroke-dasharray="1.500 .8"><path d="M17.500 3.500l5.500 6-3 .5-4 5 .5 4.500-3 1.500-7-9 3-2 4 .5 4-5z"/></g><path d="M9.500 16.500l-5.500 6" stroke="#808080" stroke-width="1.500"/></g></g><g transform="translate(1478,90.5)"><rect width="54" height="53.5" fill="#c0c0c0"/><rect width="54" height="2" fill="#fff"/><rect width="2" height="53.5" fill="#fff"/><rect y="51.5" width="54" height="2" fill="#808080"/><rect x="52" width="2" height="53.5" fill="#808080"/><g transform="scale(2)"><g fill="none" stroke="#808080" stroke-width="1.300"><rect x="4.500" y="4.500" width="18" height="18"/><path d="M16.500 4.500v6h-6v6M4.500 16.500h18"/></g><g stroke="#808080" stroke-width="1" stroke-dasharray="1 1"><path d="M10.500 6v3M6 10.500h3M16.500 12v4M10.500 18v3M16.500 18v3"/></g></g></g><g transform="translate(1536,90.5)"><rect width="54" height="53.5" fill="#c0c0c0"/><rect width="54" height="2" fill="#fff"/><rect width="2" height="53.5" fill="#fff"/><rect y="51.5" width="54" height="2" fill="#000"/><rect x="52" width="2" height="53.5" fill="#000"/><g transform="scale(2)"><path d="M19.600 8.400h-5.600v9.900h-6.800" fill="none" stroke="#00e" stroke-width="9.500" stroke-linejoin="round" stroke-linecap="round"/><path d="M19.600 8.400h-5.600v9.900h-6.800" fill="none" stroke="#088" stroke-width="5" stroke-linejoin="round" stroke-linecap="round"/><path d="M19.600 8.400h-5.600v9.900h-6.800" fill="none" stroke="#000" stroke-width="1"/></g></g><g transform="translate(1594,90.5)"><rect width="54" height="53.5" fill="#c0c0c0"/><rect width="54" height="2" fill="#fff"/><rect width="2" height="53.5" fill="#fff"/><rect y="51.5" width="54" height="2" fill="#000"/><rect x="52" width="2" height="53.5" fill="#000"/><g transform="scale(2)"><rect x="3" y="3" width="21" height="20.500" fill="#2a2"/><polygon points="9,3 24,3 24,6 17,12" fill="#a33"/><polygon points="24,5 24,23.500 15,23.500 14,14" fill="#15e"/><polygon points="3,23.500 8,17 16,23.500" fill="#ee4"/><circle cx="12.900" cy="13.900" r="7.800" fill="#8f8" stroke="#000" stroke-width="1.200"/><path d="M12.900 13.900l5.500-5.500a7.800 7.800 0 0 1 0 11z" fill="#0ff"/><path d="M12.900 13.900l5.500 5.500a7.800 7.800 0 0 1-9 1.300z" fill="#ee8"/><circle cx="12.900" cy="13.900" r="7.800" fill="none" stroke="#000" stroke-width="1.200"/></g></g><g transform="translate(1664,90.5)"><rect width="54" height="53.5" fill="#c0c0c0"/><rect width="54" height="2" fill="#fff"/><rect width="2" height="53.5" fill="#fff"/><rect y="51.5" width="54" height="2" fill="#000"/><rect x="52" width="2" height="53.5" fill="#000"/><g transform="scale(2)"><circle cx="12" cy="13" r="7.500" fill="#00d" stroke="#000" stroke-width="1"/><path d="M7 10l3-1 2-2 3 1-1 3-3 2-2-1zM11 14l3 1 1 3-2 1z" fill="#1e3"/><rect x="15" y="12.5" width="9" height="11" fill="#000"/><rect x="17" y="13.3" width="6" height="1" fill="#800"/><rect x="16" y="15.5" width="3" height="3" fill="#fff"/><rect x="17" y="16.5" width="2" height="2" fill="#888"/><rect x="16" y="19.5" width="3" height="3" fill="#fff"/><rect x="17" y="20.5" width="2" height="2" fill="#888"/><rect x="20" y="15.5" width="3" height="3" fill="#fff"/><rect x="21" y="16.5" width="2" height="2" fill="#888"/><rect x="20" y="19.5" width="3" height="3" fill="#fff"/><rect x="21" y="20.5" width="2" height="2" fill="#888"/></g></g><g transform="translate(1722,90.5)"><rect width="54" height="53.5" fill="#c0c0c0"/><rect width="54" height="2" fill="#fff"/><rect width="2" height="53.5" fill="#fff"/><rect y="51.5" width="54" height="2" fill="#000"/><rect x="52" width="2" height="53.5" fill="#000"/><g transform="scale(2)"><g transform="translate(9,6) scale(1.15)"><path d="M0 0v11l2.5-2.5 2 4.5 1.8-.8-2-4.4h3.6z" fill="#fff" stroke="#000" stroke-width="1"/></g><rect x="15" y="12.5" width="9" height="11" fill="#000"/><rect x="17" y="13.3" width="6" height="1" fill="#800"/><rect x="16" y="15.5" width="3" height="3" fill="#fff"/><rect x="17" y="16.5" width="2" height="2" fill="#888"/><rect x="16" y="19.5" width="3" height="3" fill="#fff"/><rect x="17" y="20.5" width="2" height="2" fill="#888"/><rect x="20" y="15.5" width="3" height="3" fill="#fff"/><rect x="21" y="16.5" width="2" height="2" fill="#888"/><rect x="20" y="19.5" width="3" height="3" fill="#fff"/><rect x="21" y="20.5" width="2" height="2" fill="#888"/></g></g><g transform="translate(1780,90.5)"><rect width="54" height="53.5" fill="#c0c0c0"/><rect width="54" height="2" fill="#fff"/><rect width="2" height="53.5" fill="#fff"/><rect y="51.5" width="54" height="2" fill="#000"/><rect x="52" width="2" height="53.5" fill="#000"/><g transform="scale(2)"><polygon points="3,15 3,23 14,23 10,16" fill="#00c"/><polygon points="3,15 3,23 7,23 6,17 8,15" fill="#173"/><g transform="rotate(-45 18 9)"><rect x="10" y="6.500" width="12" height="5" fill="#e00"/><rect x="12" y="7.500" width="9" height="1" fill="#fff"/><polygon points="10,6.500 10,11.500 5,9" fill="#fe0"/><polygon points="6.500,8.300 6.500,9.700 4,9" fill="#000"/></g><rect x="15" y="12.5" width="9" height="11" fill="#000"/><rect x="17" y="13.3" width="6" height="1" fill="#800"/><rect x="16" y="15.5" width="3" height="3" fill="#fff"/><rect x="17" y="16.5" width="2" height="2" fill="#888"/><rect x="16" y="19.5" width="3" height="3" fill="#fff"/><rect x="17" y="20.5" width="2" height="2" fill="#888"/><rect x="20" y="15.5" width="3" height="3" fill="#fff"/><rect x="21" y="16.5" width="2" height="2" fill="#888"/><rect x="20" y="19.5" width="3" height="3" fill="#fff"/><rect x="21" y="20.5" width="2" height="2" fill="#888"/></g></g><g transform="translate(1838,90.5)"><rect width="54" height="53.5" fill="#c0c0c0"/><rect width="54" height="2" fill="#fff"/><rect width="2" height="53.5" fill="#fff"/><rect y="51.5" width="54" height="2" fill="#000"/><rect x="52" width="2" height="53.5" fill="#000"/><g transform="scale(2)"><g stroke="#399" stroke-width=".8" stroke-dasharray="1 .5"><path d="M3 3l8 8M7 3l8 8M12 3l6 6M3 10l9 10M3 22l8-8M16 3l6 6M22 3l-4 4M9 22l4-4"/></g><path d="M3.500 14.500l4 4 11.500-12.500 4 4" fill="none" stroke="#c11" stroke-width="2"/><path d="M3.500 15.500l4 4 11.500-12.500" fill="none" stroke="#500" stroke-width="1"/><rect x="15" y="12.5" width="9" height="11" fill="#000"/><rect x="17" y="13.3" width="6" height="1" fill="#800"/><rect x="16" y="15.5" width="3" height="3" fill="#fff"/><rect x="17" y="16.5" width="2" height="2" fill="#888"/><rect x="16" y="19.5" width="3" height="3" fill="#fff"/><rect x="17" y="20.5" width="2" height="2" fill="#888"/><rect x="20" y="15.5" width="3" height="3" fill="#fff"/><rect x="21" y="16.5" width="2" height="2" fill="#888"/><rect x="20" y="19.5" width="3" height="3" fill="#fff"/><rect x="21" y="20.5" width="2" height="2" fill="#888"/></g></g><g transform="translate(1896,90.5)"><rect width="54" height="53.5" fill="#c0c0c0"/><rect width="54" height="2" fill="#fff"/><rect width="2" height="53.5" fill="#fff"/><rect y="51.5" width="54" height="2" fill="#808080"/><rect x="52" width="2" height="53.5" fill="#808080"/><g transform="scale(2)"><g fill="none" stroke="#808080" stroke-width="1.300"><rect x="5.500" y="5.500" width="13" height="13"/><path d="M8 12h9M12.500 7.500v9"/><rect x="14.500" y="13.500" width="8" height="9" fill="#c0c0c0"/><path d="M18.500 13.500v9M14.500 18h8"/></g></g></g><rect x="239" y="96" width="583" height="35" fill="#fff"/><rect x="239" y="96" width="583" height="3" fill="#808080"/><rect x="239" y="96" width="3" height="35" fill="#808080"/><rect x="242" y="99" width="580" height="2" fill="#404040"/><rect x="242" y="99" width="2" height="32" fill="#404040"/><rect x="244.500" y="101" width="560" height="26" fill="#0a78d7"/><rect x="245.500" y="102" width="558" height="24" fill="none" stroke="#333" stroke-width="2" stroke-dasharray="2 2"/><rect x="820" y="91" width="5" height="53" fill="#222"/></svg>
<span class="t" style="left:250.0px;top:101.2px;font-size:23px;font-weight:normal;color:#fff;font-family:'Liberation Sans','Noto Sans CJK SC',sans-serif;letter-spacing:-2.69px;">oad</span>
<div class="abs" style="left:178px;top:950px;width:336px;height:411.5px;background:#fff;border:2px solid #6d6d6d;box-sizing:border-box;"></div>
<div class="abs" style="left:180px;top:952px;width:332px;height:21.5px;background:#bccbdc;"></div>
<span class="t" style="left:185.3px;top:950.1px;font-size:22px;font-weight:normal;color:#000;font-family:'Liberation Sans','Noto Sans CJK SC',sans-serif;letter-spacing:0.69px;">Map of AB_voc</span>
<div class="abs" style="left:491px;top:953px;width:20px;height:19px;background:#d4d0c8;box-sizing:border-box;border-left:2px solid #fff;border-top:2px solid #fff;border-right:2px solid #404040;border-bottom:2px solid #404040;"></div><svg class="abs" style="left:491px;top:953px" width="20" height="19" viewBox="0 0 20 19"><path d="M5.0 5.0l9 9M14.0 5.0l-9 9" stroke="#000" stroke-width="3.2"/></svg>
<span class="t" style="left:304.3px;top:980.4px;font-size:25px;font-weight:normal;color:#000;font-family:'Liberation Sans','Noto Sans CJK SC',sans-serif;letter-spacing:0.00px;-webkit-text-stroke:0.95px #000;transform:scaleX(1.0875);transform-origin:0 0;">AB_voc</span>
<div class="abs" style="left:201.7px;top:1024.2px;width:36.3px;height:2px;background:#00e000;"></div>
<span class="t" style="left:246.3px;top:1015.4px;font-size:17.5px;font-weight:normal;color:#000;font-family:'Liberation Sans','Noto Sans CJK SC',sans-serif;letter-spacing:0.00px;-webkit-text-stroke:0.72px #000;transform:scaleX(1.2232);transform-origin:0 0;">0.0000 to 0.4000</span>
<div class="abs" style="left:201.7px;top:1052.2px;width:36.3px;height:2px;background:#66e020;"></div>
<span class="t" style="left:246.3px;top:1043.4px;font-size:17.5px;font-weight:normal;color:#000;font-family:'Liberation Sans','Noto Sans CJK SC',sans-serif;letter-spacing:0.00px;-webkit-text-stroke:0.72px #000;transform:scaleX(1.2232);transform-origin:0 0;">0.4000 to 0.6000</span>
<div class="abs" style="left:201.7px;top:1080.2px;width:36.3px;height:2px;background:#d8f000;"></div>
<span class="t" style="left:246.3px;top:1071.4px;font-size:17.5px;font-weight:normal;color:#000;font-family:'Liberation Sans','Noto Sans CJK SC',sans-serif;letter-spacing:0.00px;-webkit-text-stroke:0.72px #000;transform:scaleX(1.2232);transform-origin:0 0;">0.6000 to 0.7500</span>
<div class="abs" style="left:201.7px;top:1108.2px;width:36.3px;height:2px;background:#ffc800;"></div>
<span class="t" style="left:246.3px;top:1099.4px;font-size:17.5px;font-weight:normal;color:#000;font-family:'Liberation Sans','Noto Sans CJK SC',sans-serif;letter-spacing:0.00px;-webkit-text-stroke:0.72px #000;transform:scaleX(1.2232);transform-origin:0 0;">0.7500 to 0.9000</span>
<div class="abs" style="left:201.7px;top:1136.2px;width:36.3px;height:2px;background:#e07818;"></div>
<span class="t" style="left:246.3px;top:1127.4px;font-size:17.5px;font-weight:normal;color:#000;font-family:'Liberation Sans','Noto Sans CJK SC',sans-serif;letter-spacing:0.00px;-webkit-text-stroke:0.72px #000;transform:scaleX(1.2232);transform-origin:0 0;">0.9000 to 1.0000</span>
<div class="abs" style="left:201.7px;top:1164.2px;width:36.3px;height:2px;background:#b01010;"></div>
<span class="t" style="left:246.3px;top:1155.4px;font-size:17.5px;font-weight:normal;color:#000;font-family:'Liberation Sans','Noto Sans CJK SC',sans-serif;letter-spacing:0.00px;-webkit-text-stroke:0.72px #000;transform:scaleX(1.2232);transform-origin:0 0;">1.0000 to 1.6000</span>
<span class="t" style="left:320.7px;top:1182.1px;font-size:24px;font-weight:normal;color:#000;font-family:'Liberation Sans','Noto Sans CJK SC',sans-serif;letter-spacing:0.00px;-webkit-text-stroke:0.95px #000;transform:scaleX(1.2038);transform-origin:0 0;">Flow</span>
<div class="abs" style="left:200px;top:1214px;width:97.5px;height:27.6px;background:#808080;"></div>
<div class="abs" style="left:297.5px;top:1221px;width:96.1px;height:14px;background:#808080;"></div>
<div class="abs" style="left:393.6px;top:1224.6px;width:96.2px;height:7px;background:#808080;"></div>
<span class="t" style="left:223.4px;top:1243.1px;font-size:17.5px;font-weight:normal;color:#000;font-family:'Liberation Sans','Noto Sans CJK SC',sans-serif;letter-spacing:0.00px;-webkit-text-stroke:0.72px #000;transform:scaleX(1.2149);transform-origin:0 0;">2500</span>
<span class="t" style="left:320.7px;top:1243.1px;font-size:17.5px;font-weight:normal;color:#000;font-family:'Liberation Sans','Noto Sans CJK SC',sans-serif;letter-spacing:0.00px;-webkit-text-stroke:0.72px #000;transform:scaleX(1.1841);transform-origin:0 0;">1250</span>
<span class="t" style="left:421.9px;top:1243.1px;font-size:17.5px;font-weight:normal;color:#000;font-family:'Liberation Sans','Noto Sans CJK SC',sans-serif;letter-spacing:0.00px;-webkit-text-stroke:0.72px #000;transform:scaleX(1.2226);transform-origin:0 0;">625</span>
<div class="abs" style="left:201.7px;top:1275.8px;width:38px;height:8.2px;background:#000;"></div>
<div class="abs" style="left:201.7px;top:1277.8px;width:38px;height:4.2px;background:#10d828;"></div>
<span class="t" style="left:248.4px;top:1269.8px;font-size:17.5px;font-weight:normal;color:#000;font-family:'Liberation Sans','Noto Sans CJK SC',sans-serif;letter-spacing:0.00px;-webkit-text-stroke:0.72px #000;transform:scaleX(1.2720);transform-origin:0 0;">Flow</span>
<span class="t" style="left:215.0px;top:1293.7px;font-size:17.5px;font-weight:normal;color:#000;font-family:'Liberation Sans','Noto Sans CJK SC',sans-serif;letter-spacing:0.00px;-webkit-text-stroke:0.72px #000;transform:scaleX(0.9247);transform-origin:0 0;">0</span>
<span class="t" style="left:278.5px;top:1293.7px;font-size:17.5px;font-weight:normal;color:#000;font-family:'Liberation Sans','Noto Sans CJK SC',sans-serif;letter-spacing:0.00px;-webkit-text-stroke:0.72px #000;transform:scaleX(1.1949);transform-origin:0 0;">.006</span>
<span class="t" style="left:358.8px;top:1293.7px;font-size:17.5px;font-weight:normal;color:#000;font-family:'Liberation Sans','Noto Sans CJK SC',sans-serif;letter-spacing:0.00px;-webkit-text-stroke:0.72px #000;transform:scaleX(1.1979);transform-origin:0 0;">.012</span>
<span class="t" style="left:436.8px;top:1293.7px;font-size:17.5px;font-weight:normal;color:#000;font-family:'Liberation Sans','Noto Sans CJK SC',sans-serif;letter-spacing:0.00px;-webkit-text-stroke:0.72px #000;transform:scaleX(1.1802);transform-origin:0 0;">.018</span>
<div class="abs" style="left:220px;top:1316px;width:237.6px;height:11.3px;background:#000;"></div>
<div class="abs" style="left:299.9px;top:1318px;width:75.9px;height:7.3px;background:#fff;"></div>
<span class="t" style="left:319.2px;top:1333.2px;font-size:17.5px;font-weight:normal;color:#000;font-family:'Liberation Sans','Noto Sans CJK SC',sans-serif;letter-spacing:0.00px;-webkit-text-stroke:0.72px #000;transform:scaleX(1.2611);transform-origin:0 0;">Miles</span>
<div class="abs" style="left:2346px;top:226px;width:142px;height:914px;background:#f0f0f0;box-sizing:border-box;border-left:3px solid #fbfbfb;border-top:3px solid #fbfbfb;border-right:2.5px solid #696969;border-bottom:2.5px solid #696969;box-shadow:-1px -1px 0 #e6e6e6;"></div>
<div class="abs" style="left:2352px;top:232px;width:108px;height:21.5px;background:#99b4d1;"></div>
<span class="t" style="left:2358.0px;top:230.2px;font-size:23.5px;font-weight:normal;color:#000;font-family:'Liberation Sans','Noto Sans CJK SC',sans-serif;letter-spacing:0.28px;">Tools</span>
<div class="abs" style="left:2460px;top:232.5px;width:21px;height:20px;background:#d4d0c8;box-sizing:border-box;border-left:2px solid #fff;border-top:2px solid #fff;border-right:2px solid #404040;border-bottom:2px solid #404040;"></div><svg class="abs" style="left:2460px;top:232.5px" width="21" height="20" viewBox="0 0 21 20"><path d="M5.5 5.5l9 9M14.5 5.5l-9 9" stroke="#000" stroke-width="3.2"/></svg>
<svg class="abs" style="left:2346px;top:226px" width="142" height="914" viewBox="2346 226 142 914" shape-rendering="crispEdges"><rect x="2354" y="254" width="122" height="876" fill="#dcdcdc"/><rect x="2416" y="660" width="60" height="62" fill="#f0f0f0"/><g transform="translate(2358,258)"><rect width="54" height="54" fill="#c0c0c0"/><rect width="54" height="2" fill="#fff"/><rect width="2" height="54" fill="#fff"/><rect y="52" width="54" height="2" fill="#000"/><rect x="52" width="2" height="54" fill="#000"/><g transform="scale(2)"><path d="M15.500 15.800l7 6.500" stroke="#000" stroke-width="3.200"/><path d="M15.500 15.800l7 6.500" stroke="#800" stroke-width="1.800"/><path d="M16 15.500l6.500 6" stroke="#fff" stroke-width=".8"/><circle cx="11" cy="10.800" r="6" fill="#1dd" stroke="#000" stroke-width="1.300"/><path d="M8 10.800h6" stroke="#000" stroke-width="1.800"/><path d="M11 7.800v6" stroke="#000" stroke-width="1.800"/></g></g><g transform="translate(2416,258)"><rect width="54" height="54" fill="#c0c0c0"/><rect width="54" height="2" fill="#fff"/><rect width="2" height="54" fill="#fff"/><rect y="52" width="54" height="2" fill="#000"/><rect x="52" width="2" height="54" fill="#000"/><g transform="scale(2)"><path d="M15.500 15.800l7 6.500" stroke="#000" stroke-width="3.200"/><path d="M15.500 15.800l7 6.500" stroke="#800" stroke-width="1.800"/><path d="M16 15.500l6.500 6" stroke="#fff" stroke-width=".8"/><circle cx="11" cy="10.800" r="6" fill="#1dd" stroke="#000" stroke-width="1.300"/><path d="M8 10.800h6" stroke="#000" stroke-width="1.800"/></g></g><g transform="translate(2358,316)"><rect width="54" height="54" fill="#c0c0c0"/><rect width="54" height="2" fill="#fff"/><rect width="2" height="54" fill="#fff"/><rect y="52" width="54" height="2" fill="#000"/><rect x="52" width="2" height="54" fill="#000"/><g transform="scale(2)"><path d="M9 21.500l-4.500-6 1.500-1.500 3 2v-9l2-.5.8 5v-6.500l2-.3.700 6.500.300-6 2 .2.500 6.500.500-4.700 1.800.5v8l-1.500 6z" fill="#fff" stroke="#000" stroke-width="1" stroke-linejoin="round"/></g></g><g transform="translate(2416,316)"><rect width="54" height="54" fill="#c0c0c0"/><rect width="54" height="2" fill="#fff"/><rect width="2" height="54" fill="#fff"/><rect y="52" width="54" height="2" fill="#000"/><rect x="52" width="2" height="54" fill="#000"/><g transform="scale(2)"><g transform="translate(7,4) scale(1.1)"><path d="M0 0v11l2.5-2.5 2 4.5 1.8-.8-2-4.4h3.6z" fill="#fff" stroke="#000" stroke-width="1"/></g><rect x="9" y="15" width="12" height="7" fill="none" stroke="#000" stroke-width="1" stroke-dasharray="2 1"/><path d="M15.500 5.500h4M17.500 3.500v4" stroke="#000" stroke-width="1"/></g></g><g transform="translate(2358,374)"><rect width="54" height="54" fill="#c0c0c0"/><rect width="54" height="2" fill="#fff"/><rect width="2" height="54" fill="#fff"/><rect y="52" width="54" height="2" fill="#000"/><rect x="52" width="2" height="54" fill="#000"/><g transform="scale(2)"><path d="M8.500 9.500l5-3.500v2.300h5v2.400h-5v2.300z" fill="#d00" stroke="#800" stroke-width=".5"/><rect x="3" y="16" width="21" height="4.500" fill="#000"/><path d="M4 18.200h4M10 18.200h4M16 18.200h4M22 18.200h2" stroke="#fff" stroke-width="1"/></g></g><g transform="translate(2416,374)"><rect width="54" height="54" fill="#c0c0c0"/><rect width="54" height="2" fill="#fff"/><rect width="2" height="54" fill="#fff"/><rect y="52" width="54" height="2" fill="#000"/><rect x="52" width="2" height="54" fill="#000"/><g transform="scale(2)"><path d="M10.500 9.500l5-3.500v2.300h4.500v2.400h-4.500v2.300z" fill="#d00" stroke="#800" stroke-width=".5"/><rect x="7.500" y="5.500" width="1.600" height="8" fill="#d00"/><rect x="3" y="16" width="21" height="4.500" fill="#000"/><path d="M4 18.200h4M10 18.200h4M16 18.200h4M22 18.200h2" stroke="#fff" stroke-width="1"/></g></g><g transform="translate(2358,432)"><rect width="54" height="54" fill="#808080"/><rect width="54" height="2" fill="#000"/><rect width="2" height="54" fill="#000"/><rect y="52" width="54" height="2" fill="#c0c0c0"/><rect x="52" width="2" height="54" fill="#c0c0c0"/><rect x="2" y="2" width="50" height="2" fill="#404040"/><rect x="2" y="2" width="2" height="50" fill="#404040"/><g transform="scale(2)"><circle cx="13.500" cy="7" r="2.300" fill="#000"/><path d="M10 11h5.500v9.500h2.500v2h-9v-2h2.500v-7.500h-1.500z" fill="#000"/></g></g><g transform="translate(2416,432)"><rect width="54" height="54" fill="#c0c0c0"/><rect width="54" height="2" fill="#fff"/><rect width="2" height="54" fill="#fff"/><rect y="52" width="54" height="2" fill="#000"/><rect x="52" width="2" height="54" fill="#000"/><g transform="scale(2)"><circle cx="14" cy="6" r="1.800" fill="#000"/><path d="M11.500 9h4v8h2v1.500h-7v-1.500h2v-6.500h-1z" fill="#000"/><path d="M19 3v7M19 3l3.500 2-.5 3" fill="none" stroke="#000" stroke-width="1"/><ellipse cx="18" cy="10" rx="1.500" ry="1.100" fill="#000"/><rect x="3" y="15.500" width="10" height="7.500" fill="#000"/><rect x="5" y="14.500" width="4" height="1.500" fill="#000"/><path d="M3.500 17h9M3.500 21.500h9" stroke="#fff" stroke-width="1" stroke-dasharray="1.500 1"/><circle cx="7.500" cy="19.300" r="2.200" fill="#0cf"/><circle cx="7.500" cy="19.300" r="1" fill="#8ef"/></g></g><g transform="translate(2358,490)"><rect width="54" height="54" fill="#c0c0c0"/><rect width="54" height="2" fill="#fff"/><rect width="2" height="54" fill="#fff"/><rect y="52" width="54" height="2" fill="#000"/><rect x="52" width="2" height="54" fill="#000"/><g transform="scale(2)"><path d="M8.500 3.500l2.500-.5 1 7 5.500 1 1.500-2 2 1-1.500 8-2 3.500h-8l-1-3-3.500-4.500 1.500-2 3 2z" fill="#27e" stroke="#006" stroke-width="1"/><g transform="translate(11.5,8.5) scale(0.85)"><path d="M0 0v11l2.5-2.5 2 4.5 1.8-.8-2-4.4h3.6z" fill="#fff" stroke="#000" stroke-width="1"/></g></g></g><g transform="translate(2416,490)"><rect width="54" height="54" fill="#c0c0c0"/><rect width="54" height="2" fill="#fff"/><rect width="2" height="54" fill="#fff"/><rect y="52" width="54" height="2" fill="#000"/><rect x="52" width="2" height="54" fill="#000"/><g transform="scale(2)"><circle cx="13.500" cy="13.500" r="10" fill="#27e" stroke="#006" stroke-width="1.200"/><g transform="translate(11.5,8) scale(0.85)"><path d="M0 0v11l2.5-2.5 2 4.5 1.8-.8-2-4.4h3.6z" fill="#fff" stroke="#000" stroke-width="1"/></g></g></g><g transform="translate(2358,548)"><rect width="54" height="54" fill="#c0c0c0"/><rect width="54" height="2" fill="#fff"/><rect width="2" height="54" fill="#fff"/><rect y="52" width="54" height="2" fill="#000"/><rect x="52" width="2" height="54" fill="#000"/><g transform="scale(2)"><path d="M5 4.500h8.500l2 3 7-.5v12l-5 .5-1 4h-8.500l-3-3.500z" fill="#27e" stroke="#006" stroke-width="1.200"/><g transform="translate(10.5,9) scale(0.85)"><path d="M0 0v11l2.5-2.5 2 4.5 1.8-.8-2-4.4h3.6z" fill="#fff" stroke="#000" stroke-width="1"/></g></g></g><g transform="translate(2416,548)"><rect width="54" height="54" fill="#c0c0c0"/><rect width="54" height="2" fill="#fff"/><rect width="2" height="54" fill="#fff"/><rect y="52" width="54" height="2" fill="#000"/><rect x="52" width="2" height="54" fill="#000"/><g transform="scale(2)"><g transform="translate(11.5,6.5) scale(0.85)"><path d="M0 0v11l2.5-2.5 2 4.5 1.8-.8-2-4.4h3.6z" fill="#fff" stroke="#333" stroke-width="1"/></g><path d="M6 7l15 14M21 7l-15 14" stroke="#2a6ae0" stroke-width="1.500"/></g></g><g transform="translate(2358,606)"><rect width="54" height="54" fill="#c0c0c0"/><rect width="54" height="2" fill="#fff"/><rect width="2" height="54" fill="#fff"/><rect y="52" width="54" height="2" fill="#000"/><rect x="52" width="2" height="54" fill="#000"/><g transform="scale(2)"><rect x="2.500" y="9" width="22" height="8.500" fill="#ee0" stroke="#000" stroke-width=".8"/><path d="M5 9v3M8 9v4.500M11 9v3M14 9v4.500M17 9v3M20 9v4.500M23 9v3" stroke="#000" stroke-width=".8"/><path d="M2.500 17.500h22v1h-22z" fill="#880"/><text x="20.500" y="16.500" font-size="4.500" font-weight="bold" fill="#000" font-family="Liberation Sans,sans-serif">2</text></g></g><g transform="translate(2416,606)"><rect width="54" height="54" fill="#c0c0c0"/><rect width="54" height="2" fill="#fff"/><rect width="2" height="54" fill="#fff"/><rect y="52" width="54" height="2" fill="#000"/><rect x="52" width="2" height="54" fill="#000"/><g transform="scale(2)"><rect x="9" y="5" width="12" height="12" fill="#e8e8e8" stroke="#888" stroke-width=".6"/><path d="M11 15l7-7M18 8h-3.500M18 8v3.500" stroke="#22c" stroke-width="1.200" fill="none"/><rect x="3" y="2.500" width="6.500" height="13" fill="#ee0" stroke="#000" stroke-width=".8"/><path d="M3 5h3M3 8h4.500M3 11h3M3 14h4.500" stroke="#000" stroke-width=".8"/><rect x="10.500" y="16" width="13" height="7" fill="#ee0" stroke="#000" stroke-width=".8"/><path d="M13 16v3M16 16v4M19 16v3M22 16v4" stroke="#000" stroke-width=".8"/></g></g><g transform="translate(2358,664)"><rect width="54" height="54" fill="#c0c0c0"/><rect width="54" height="2" fill="#fff"/><rect width="2" height="54" fill="#fff"/><rect y="52" width="54" height="2" fill="#000"/><rect x="52" width="2" height="54" fill="#000"/><g transform="scale(2)"><path d="M3 3l7 4 3 6-4.500 10" fill="none" stroke="#e00" stroke-width="3"/><path d="M5 2.500l9 4 8-1" fill="none" stroke="#ee0" stroke-width="2.500"/><path d="M22.500 8l-7 3-4 5-3 7" fill="none" stroke="#22d" stroke-width="3"/><path d="M14 7l8 .5v3l-4 .5" fill="#e00"/></g></g><g transform="translate(2358,722)"><rect width="54" height="54" fill="#c0c0c0"/><rect width="54" height="2" fill="#fff"/><rect width="2" height="54" fill="#fff"/><rect y="52" width="54" height="2" fill="#000"/><rect x="52" width="2" height="54" fill="#000"/><g transform="scale(2)"><g transform="translate(8.5,5) scale(1.25)"><path d="M0 0v11l2.5-2.5 2 4.5 1.8-.8-2-4.4h3.6z" fill="#fff" stroke="#000" stroke-width="1"/></g></g></g><g transform="translate(2416,722)"><rect width="54" height="54" fill="#c0c0c0"/><rect width="54" height="2" fill="#fff"/><rect width="2" height="54" fill="#fff"/><rect y="52" width="54" height="2" fill="#000"/><rect x="52" width="2" height="54" fill="#000"/><g transform="scale(2)"><g transform="translate(5.5,3) scale(1.05)"><path d="M0 0v11l2.5-2.5 2 4.5 1.8-.8-2-4.4h3.6z" fill="#fff" stroke="#000" stroke-width="1"/></g><path d="M7.500 18.500l2.500-3h10v6.500h-10z" fill="#fff" stroke="#000" stroke-width="1"/><circle cx="10" cy="18.700" r=".8" fill="#000"/></g></g><g transform="translate(2358,780)"><rect width="54" height="54" fill="#c0c0c0"/><rect width="54" height="2" fill="#fff"/><rect width="2" height="54" fill="#fff"/><rect y="52" width="54" height="2" fill="#000"/><rect x="52" width="2" height="54" fill="#000"/><g transform="scale(2)"><text x="13.500" y="22.500" font-size="25" font-weight="bold" text-anchor="middle" font-family="Liberation Serif,serif" fill="#000">T</text></g></g><g transform="translate(2416,780)"><rect width="54" height="54" fill="#c0c0c0"/><rect width="54" height="2" fill="#fff"/><rect width="2" height="54" fill="#fff"/><rect y="52" width="54" height="2" fill="#000"/><rect x="52" width="2" height="54" fill="#000"/><g transform="scale(2)"><text x="8.500" y="16.500" font-size="17" font-weight="bold" text-anchor="middle" font-family="Liberation Serif,serif" fill="#000">T</text><path d="M21.500 4q2 14-16 16.500" fill="none" stroke="#000" stroke-width="1"/></g></g><g transform="translate(2358,838)"><rect width="54" height="54" fill="#c0c0c0"/><rect width="54" height="2" fill="#fff"/><rect width="2" height="54" fill="#fff"/><rect y="52" width="54" height="2" fill="#000"/><rect x="52" width="2" height="54" fill="#000"/><g transform="scale(2)"><rect x="5" y="5.500" width="16" height="16" fill="none" stroke="#000" stroke-width="1"/></g></g><g transform="translate(2416,838)"><rect width="54" height="54" fill="#c0c0c0"/><rect width="54" height="2" fill="#fff"/><rect width="2" height="54" fill="#fff"/><rect y="52" width="54" height="2" fill="#000"/><rect x="52" width="2" height="54" fill="#000"/><g transform="scale(2)"><rect x="5" y="5.500" width="16" height="16" rx="3.500" fill="none" stroke="#000" stroke-width="1"/></g></g><g transform="translate(2358,896)"><rect width="54" height="54" fill="#c0c0c0"/><rect width="54" height="2" fill="#fff"/><rect width="2" height="54" fill="#fff"/><rect y="52" width="54" height="2" fill="#000"/><rect x="52" width="2" height="54" fill="#000"/><g transform="scale(2)"><circle cx="13" cy="13.500" r="8" fill="none" stroke="#000" stroke-width="1"/></g></g><g transform="translate(2416,896)"><rect width="54" height="54" fill="#c0c0c0"/><rect width="54" height="2" fill="#fff"/><rect width="2" height="54" fill="#fff"/><rect y="52" width="54" height="2" fill="#000"/><rect x="52" width="2" height="54" fill="#000"/><g transform="scale(2)"><path d="M9 5.500h12v11h-7.500v5h-8.500v-12z" fill="none" stroke="#000" stroke-width="1"/></g></g><g transform="translate(2358,954)"><rect width="54" height="54" fill="#c0c0c0"/><rect width="54" height="2" fill="#fff"/><rect width="2" height="54" fill="#fff"/><rect y="52" width="54" height="2" fill="#000"/><rect x="52" width="2" height="54" fill="#000"/><g transform="scale(2)"><path d="M4 11l4 2.500 4-5.500 5 10 5.500-5" fill="none" stroke="#000" stroke-width="1"/></g></g><g transform="translate(2416,954)"><rect width="54" height="54" fill="#c0c0c0"/><rect width="54" height="2" fill="#fff"/><rect width="2" height="54" fill="#fff"/><rect y="52" width="54" height="2" fill="#000"/><rect x="52" width="2" height="54" fill="#000"/><g transform="scale(2)"><path d="M5.500 4.500q1 14 15.500 15.500" fill="none" stroke="#000" stroke-width="1"/></g></g><g transform="translate(2358,1012)"><rect width="54" height="54" fill="#c0c0c0"/><rect width="54" height="2" fill="#fff"/><rect width="2" height="54" fill="#fff"/><rect y="52" width="54" height="2" fill="#000"/><rect x="52" width="2" height="54" fill="#000"/><g transform="scale(2)"><circle cx="13.500" cy="13.500" r="9" fill="#fff" stroke="#00d" stroke-width="1.200"/><polygon points="13.500,4.800 15.700,11 22,11 16.900,14.900 18.800,21.200 13.500,17.400 8.200,21.200 10.100,14.900 5,11 11.300,11" fill="#00d"/></g></g><g transform="translate(2416,1012)"><rect width="54" height="54" fill="#c0c0c0"/><rect width="54" height="2" fill="#fff"/><rect width="2" height="54" fill="#fff"/><rect y="52" width="54" height="2" fill="#000"/><rect x="52" width="2" height="54" fill="#000"/><g transform="scale(2)"><path d="M13.500 5v17M5 13.500h17" stroke="#000" stroke-width="1"/><polygon points="13.500,5.500 15,12 21.500,13.500 15,15 13.500,21.500 12,15 5.500,13.500 12,12" fill="#fff" stroke="#000" stroke-width=".8"/><path d="M9.500 9.500l8 8M17.500 9.500l-8 8" stroke="#000" stroke-width=".8"/><text x="13.500" y="5" font-size="5" font-weight="bold" text-anchor="middle" font-family="Liberation Sans,sans-serif">N</text><text x="13.500" y="26" font-size="5" font-weight="bold" text-anchor="middle" font-family="Liberation Sans,sans-serif">S</text><text x="3.500" y="15.300" font-size="5" font-weight="bold" text-anchor="middle" font-family="Liberation Sans,sans-serif">W</text><text x="24" y="15.300" font-size="5" font-weight="bold" text-anchor="middle" font-family="Liberation Sans,sans-serif">E</text></g></g><g transform="translate(2358,1070)"><rect width="54" height="54" fill="#c0c0c0"/><rect width="54" height="2" fill="#fff"/><rect width="2" height="54" fill="#fff"/><rect y="52" width="54" height="2" fill="#808080"/><rect x="52" width="2" height="54" fill="#808080"/><g transform="scale(2)"><rect x="4.500" y="5" width="18" height="16.500" fill="none" stroke="#808080" stroke-width="1.300"/><rect x="6.500" y="7" width="14" height="12.500" fill="none" stroke="#a0a0a0" stroke-width=".8"/><g stroke="#808080" stroke-width="1" stroke-dasharray="1 1.200"><path d="M13 10h6M12 12.500h7M11 15h8M10 17.500h9"/></g></g></g><g transform="translate(2416,1070)"><rect width="54" height="54" fill="#c0c0c0"/><rect width="54" height="2" fill="#fff"/><rect width="2" height="54" fill="#fff"/><rect y="52" width="54" height="2" fill="#000"/><rect x="52" width="2" height="54" fill="#000"/><g transform="scale(2)"><rect x="5" y="4" width="18" height="17.500" fill="#000"/><rect x="4" y="3" width="18" height="17" fill="#fff" stroke="#000" stroke-width="1"/><rect x="6" y="7.500" width="14" height="8" fill="#000"/><path d="M6.500 8.500h13M6.500 14.500h13" stroke="#fff" stroke-width="1" stroke-dasharray="1.500 1"/><rect x="7" y="10" width="12" height="3.500" fill="#334"/><circle cx="13" cy="11.700" r="2" fill="#0df"/></g></g></svg>
<div class="abs" style="left:0px;top:1466px;width:2560px;height:2px;background:#5a5a5a;"></div>
<div class="abs" style="left:0px;top:1471.5px;width:2560px;height:46.5px;background:#f0f0f0;border-top:2px solid #a0a0a0;border-left:2px solid #a0a0a0;box-sizing:border-box;"></div>
<span class="t" style="left:5.0px;top:1480.9px;font-size:25px;font-weight:normal;color:#000;font-family:'Liberation Sans','Noto Sans CJK SC',sans-serif;letter-spacing:0.71px;">Select records based on a numeric or logical condition</span>
<div class="abs" style="left:0px;top:1518px;width:2560px;height:2px;background:#fff;"></div>
<div class="abs" style="left:0px;top:1520px;width:2560px;height:80px;background:#0b0e15;"></div>
<div class="abs" style="left:96px;top:1520px;width:688px;height:80px;background:#f2f2f2;"></div>
<div class="abs" style="left:1182px;top:1520px;width:96px;height:80px;background:#34373c;"></div>
<div class="abs" style="left:896px;top:1596px;width:80px;height:4px;background:#f9b4a7;"></div>
<div class="abs" style="left:1092px;top:1596px;width:80px;height:4px;background:#f9b4a7;"></div>
<div class="abs" style="left:1182px;top:1596px;width:96px;height:4px;background:#f9b4a7;"></div>
<span class="t" style="left:177.0px;top:1544.5px;font-size:30.5px;line-height:1;font-weight:normal;color:#3b3b3b;font-family:'Noto Sans CJK SC',sans-serif;letter-spacing:0.45px;">在这里输入你要搜索的内容</span>
<span class="t" style="left:2335.0px;top:1528.2px;font-size:25px;font-weight:normal;color:#fff;font-family:'Liberation Sans','Noto Sans CJK SC',sans-serif;letter-spacing:0.02px;">20 : 35</span>
<span class="t" style="left:2309.0px;top:1564.9px;font-size:25px;font-weight:normal;color:#fff;font-family:'Liberation Sans','Noto Sans CJK SC',sans-serif;letter-spacing:0.54px;">13/06/2018</span>
<span class="t" style="left:2185.5px;top:1545.5px;font-size:27px;line-height:1;font-weight:bold;color:#fff;font-family:'Noto Sans CJK SC',sans-serif;letter-spacing:0.00px;">中</span>
<svg class="abs" style="left:0;top:1520px" width="2560" height="80" viewBox="0 1520 2560 80"><path d="M32 1548.8l13.5-1.9v12.9h-13.5zM47.5 1546.600l16.500-2.400v15.600h-16.500zM32 1561.800h13.500v12.900l-13.500-1.900zM47.500 1561.800h16.500v15.200l-16.500-2.300z" fill="#fff"/><circle cx="136" cy="1560" r="19" fill="none" stroke="#8a8a8a" stroke-width="6.5"/><circle cx="136" cy="1560" r="18.2" fill="none" stroke="#000" stroke-width="5"/><rect x="737" y="1545" width="11" height="21" rx="5.5" fill="none" stroke="#222" stroke-width="2"/><path d="M732.5 1558v3a10 10 0 0 0 20 0v-3M742.5 1571v4M737 1575.5h11" fill="none" stroke="#222" stroke-width="2"/><text x="837.5" y="1581" font-size="78" font-weight="bold" text-anchor="middle" fill="#1b7fd9" font-family="Liberation Sans,sans-serif">e</text><path d="M915 1546a3 3 0 0 1 3-3h13l4 4h19a3 3 0 0 1 3 3v26h-42z" fill="#f6cf63"/><rect x="915" y="1549" width="42" height="27.5" fill="#fce59a"/><path d="M922 1576.5v-13l3-4h22l3 4v13h-7v-9h-14v9z" fill="#3d9ae0"/><text x="1035" y="1580.5" font-size="74" font-weight="bold" text-anchor="middle" fill="#3fc0f0" font-family="Liberation Sans,sans-serif">e</text><ellipse cx="1034" cy="1559" rx="26" ry="11" transform="rotate(-36 1033 1560)" fill="none" stroke="#e8b830" stroke-width="3.5"/><rect x="1108" y="1536" width="48" height="48" fill="#1e90e8" stroke="#bfe0ff" stroke-width="1.5"/><path d="M1108 1558h48M1143 1536v48" stroke="#cfe8ff" stroke-width="2"/><rect x="1139" y="1549" width="8" height="8" fill="#1e90e8" stroke="#fff" stroke-width="1.5"/><path d="M1117 1566q16 10 26 -2" stroke="#5ab8ff" stroke-width="4" fill="none"/><path d="M1124 1544h14l-2 12h-8z" fill="#58b4f8"/><rect x="1206" y="1536" width="48" height="48" fill="#000" stroke="#777" stroke-width="1"/><path d="M1230 1536v48M1206 1560h48" stroke="#555" stroke-width="1"/><path d="M1212 1548l8-9 3 0-3 9 8 3v3l-8-1-3 6h-3l2-7z" fill="#e81010"/><rect x="1234" y="1540" width="14" height="15" rx="2" fill="none" stroke="#20d8d8" stroke-width="3"/><path d="M1210 1572l3-6h9l3 6v6h-15z" fill="#e8e020"/><rect x="1236" y="1564" width="12" height="13" rx="2" fill="none" stroke="#20e040" stroke-width="3"/><polygon points="1230,1546 1243,1560 1230,1574 1217,1560" fill="#8a0a14"/><text x="1230" y="1566" font-size="15" text-anchor="middle" fill="#fff" font-family="Liberation Serif,serif">4.5</text><g fill="none" stroke="#fff" stroke-width="2"><circle cx="1944" cy="1552" r="4.5"/><path d="M1936 1566a8 8 0 0 1 16 0"/><circle cx="1932" cy="1562" r="4"/><path d="M1924 1576a8 8 0 0 1 16 0"/></g><path d="M1998 1568l12-12 12 12" fill="none" stroke="#fff" stroke-width="2"/><g fill="none" stroke="#fff" stroke-width="2.2"><rect x="2055" y="1554" width="21" height="14"/><path d="M2076 1558h3v6h-3"/><path d="M2046 1549v5M2051 1549v5M2044 1554h9v4a4.5 4.5 0 0 1-9 0zM2048.5 1563v5h6"/></g><g fill="none" stroke="#fff" stroke-width="2.2"><path d="M2097 1551h24v19h-24M2104 1576h14M2111 1570v6"/><rect x="2091" y="1549" width="8" height="8"/><path d="M2095 1557v15h6"/></g><g fill="none" stroke="#fff" stroke-width="2"><path d="M2138 1556h5l7-7v24l-7-7h-5z"/><path d="M2155 1556a6 6 0 0 1 0 10M2159 1552a11 11 0 0 1 0 18"/><path d="M2163 1548a17 17 0 0 1 0 26" stroke="#666"/></g><g transform="rotate(-12 2258 1561)"><rect x="2243" y="1547" width="30" height="28" rx="5" fill="#f0501c"/><text x="2258" y="1571" font-size="27" font-weight="bold" text-anchor="middle" fill="#fff" font-family="Liberation Sans,sans-serif">S</text></g><path d="M2478 1544h32v26h-20l-5 6v-6h-7z" fill="#fff"/><path d="M2484 1551h20M2484 1557h20M2484 1563h12" stroke="#0b0e15" stroke-width="2"/><circle cx="2508" cy="1574.500" r="15.5" fill="#3a3a3a" stroke="#8a8a8a" stroke-width="1.5"/><text x="2508" y="1584" font-size="26" font-weight="bold" text-anchor="middle" fill="#fff" font-family="Liberation Sans,sans-serif">1</text><rect x="2550" y="1520" width="2" height="80" fill="#5a5a5a"/></svg>
<div class="abs" style="left:2495px;top:1470px;width:65px;height:48px;background:#fdfdfd;border:2px solid #c5d2e0;box-sizing:border-box;"></div>
<svg class="abs" style="left:2455px;top:1460px" width="60" height="62" viewBox="2455 1460 60 62"><g transform="rotate(-10 2484 1491)"><path d="M2462 1470q22-6 44-2 4 22 2 44-20 6-44 6z" fill="#f0501c"/><text x="2484" y="1510" font-size="50" font-weight="bold" text-anchor="middle" fill="#fff" font-family="Liberation Sans,sans-serif">S</text></g></svg>
<span class="t" style="left:2521.5px;top:1477.9px;font-size:29px;line-height:1;font-weight:bold;color:#c8161d;font-family:'Noto Sans CJK SC',sans-serif;letter-spacing:0.00px;">中</span>
<span class="t" style="left:2067.5px;top:1441.7px;font-size:76px;line-height:1;font-weight:500;color:rgba(0,0,0,0.34);font-family:'Noto Sans CJK SC',sans-serif;letter-spacing:5.00px;">知乎</span>
<span class="t" style="left:2249.0px;top:1437.8px;font-size:72px;font-weight:normal;color:rgba(0,0,0,0.34);font-family:'Liberation Sans','Noto Sans CJK SC',sans-serif;letter-spacing:0.00px;-webkit-text-stroke:0.5px rgba(0,0,0,0.34);">@</span>
<span class="t" style="left:2321.5px;top:1444.4px;font-size:75px;font-weight:normal;color:rgba(0,0,0,0.34);font-family:'Liberation Sans','Noto Sans CJK SC',sans-serif;letter-spacing:0.00px;-webkit-text-stroke:0.5px rgba(0,0,0,0.34);transform:scaleX(0.9991);transform-origin:0 0;">Song</span>
<span class="t" style="left:2062.0px;top:1436.2px;font-size:76px;line-height:1;font-weight:500;color:#fff;font-family:'Noto Sans CJK SC',sans-serif;letter-spacing:5.00px;">知乎</span>
<span class="t" style="left:2243.5px;top:1432.3px;font-size:72px;font-weight:normal;color:#fff;font-family:'Liberation Sans','Noto Sans CJK SC',sans-serif;letter-spacing:0.00px;-webkit-text-stroke:0.5px #fff;">@</span>
<span class="t" style="left:2316.0px;top:1438.9px;font-size:75px;font-weight:normal;color:#fff;font-family:'Liberation Sans','Noto Sans CJK SC',sans-serif;letter-spacing:0.00px;-webkit-text-stroke:0.5px #fff;transform:scaleX(0.9991);transform-origin:0 0;">Song</span>
<div class="abs" style="left:398px;top:85px;width:420px;height:286px;background:#f2f2f2;border:1px solid #ccc;box-shadow:5px 5px 6px rgba(0,0,0,0.45);"></div>
<div class="abs" style="left:460px;top:140px;width:353px;height:2px;background:#d7d7d7;"></div>
<div class="abs" style="left:404px;top:148px;width:410px;height:43.5px;background:#91c9f7;"></div>
<span class="t" style="left:469.0px;top:97.7px;font-size:25px;font-weight:normal;color:#000;font-family:'Liberation Sans','Noto Sans CJK SC',sans-serif;letter-spacing:-0.34px;">Settings...</span>
<span class="t" style="left:469.0px;top:155.4px;font-size:25px;font-weight:normal;color:#000;font-family:'Liberation Sans','Noto Sans CJK SC',sans-serif;letter-spacing:0.16px;">Select by Condition...</span>
<span class="t" style="left:469.0px;top:199.4px;font-size:25px;font-weight:normal;color:#000;font-family:'Liberation Sans','Noto Sans CJK SC',sans-serif;letter-spacing:-0.04px;">Select by Value...</span>
<span class="t" style="left:469.0px;top:243.4px;font-size:25px;font-weight:normal;color:#000;font-family:'Liberation Sans','Noto Sans CJK SC',sans-serif;letter-spacing:0.03px;">Select by Location...</span>
<span class="t" style="left:469.0px;top:287.4px;font-size:25px;font-weight:normal;color:#000;font-family:'Liberation Sans','Noto Sans CJK SC',sans-serif;letter-spacing:-0.12px;">Select by Theme...</span>
<span class="t" style="left:469.0px;top:331.4px;font-size:25px;font-weight:normal;color:#000;font-family:'Liberation Sans','Noto Sans CJK SC',sans-serif;letter-spacing:0.11px;">Combine Selection...</span>
</body></html>
